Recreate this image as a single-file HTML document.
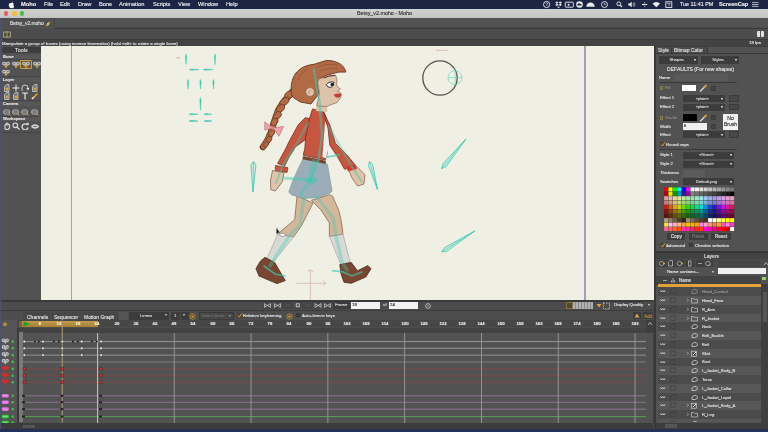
<!DOCTYPE html>
<html><head><meta charset="utf-8">
<style>
*{box-sizing:border-box;margin:0;padding:0}
html,body{width:768px;height:432px;overflow:hidden;background:#4b4b4b;font-family:"Liberation Sans",sans-serif;color:#ddd;position:relative}
.a{position:absolute}
.t{position:absolute;white-space:nowrap;line-height:1;will-change:transform;-webkit-text-stroke:0.12px currentColor}
</style></head><body>

<div class="a" style="left:0px;top:0px;width:768px;height:9px;background:#1c2543;"></div>
<div class="t" style="left:21px;top:2.1px;font-size:5.7px;color:#f4f4f4;font-weight:bold">Moho</div>
<div class="t" style="left:44px;top:2.1px;font-size:5.7px;color:#f4f4f4;">File</div>
<div class="t" style="left:60px;top:2.1px;font-size:5.7px;color:#f4f4f4;">Edit</div>
<div class="t" style="left:78px;top:2.1px;font-size:5.7px;color:#f4f4f4;">Draw</div>
<div class="t" style="left:98.5px;top:2.1px;font-size:5.7px;color:#f4f4f4;">Bone</div>
<div class="t" style="left:119px;top:2.1px;font-size:5.7px;color:#f4f4f4;">Animation</div>
<div class="t" style="left:152.5px;top:2.1px;font-size:5.7px;color:#f4f4f4;">Scripts</div>
<div class="t" style="left:178px;top:2.1px;font-size:5.7px;color:#f4f4f4;">View</div>
<div class="t" style="left:198px;top:2.1px;font-size:5.7px;color:#f4f4f4;">Window</div>
<div class="t" style="left:226px;top:2.1px;font-size:5.7px;color:#f4f4f4;">Help</div>
<svg class="a" style="left:8px;top:1px" width="7" height="8" viewBox="0 0 7 8"><path d="M3.5 2.2 C2.6 1.6 1 1.9 0.8 3.6 C0.6 5.3 1.8 7.4 2.6 7.3 C3.1 7.2 3.2 7 3.6 7 C4 7 4.1 7.3 4.6 7.3 C5.3 7.2 5.9 6.2 6.2 5.4 C5.2 5 5.1 3.4 6 2.8 C5.4 2 4.4 1.8 3.5 2.2 Z M3.6 1.8 C3.6 1 4.2 0.5 4.8 0.4 C4.9 1.2 4.3 1.8 3.6 1.8Z" fill="#f4f4f4"/></svg>
<div class="t" style="left:679.7px;top:2.2px;font-size:5.4px;color:#f4f4f4;">Tue 11:41 PM</div>
<div class="t" style="left:719px;top:2.1px;font-size:5.6px;color:#f4f4f4;font-weight:bold">ScreenCap</div>
<svg class="a" style="left:540px;top:0" width="228" height="9" viewBox="540 0 228 9" fill="none" stroke="#ececec" stroke-width="0.9">
<circle cx="546.6" cy="4.5" r="3.1"/><path d="M545.6 3.6 q1-1.6 2 0 q0 1-1 1.3 v0.6" stroke-width="0.7"/>
<path d="M555.2 2.6 l1.7-1.1 1.7 1.1 -1.7 1.1z M558.6 2.6 l1.7-1.1 1.7 1.1 -1.7 1.1z M555.2 4.8 l1.7-1.1 1.7 1.1 -1.7 1.1z M558.6 4.8 l1.7-1.1 1.7 1.1 -1.7 1.1z M556.9 6.8 l1.7 1.1 1.7-1.1" fill="#ececec" stroke="none"/>
<rect x="565.3" y="2.2" width="8" height="5" rx="0.6"/><circle cx="568.6" cy="4.7" r="1" fill="#ececec" stroke="none"/>
<circle cx="579.5" cy="4.5" r="3.3" fill="#ececec" stroke="none"/><path d="M577.3 5.6 h4.5 q0-1.8-1.8-1.8 q-0.6-1-1.8-0.2 q-1 0.4-0.9 2z" fill="#1c2543" stroke="none"/>
<path d="M586.3 6.8 a4.2 4.2 0 0 1 8.4 0z" fill="#ececec" stroke="none"/>
<circle cx="604.5" cy="4.5" r="3"/><path d="M604.5 2.8 v1.8 h1.4" stroke-width="0.7"/>
<circle cx="618.8" cy="3.8" r="1.9"/><path d="M620.2 5.2 l1.8 1.8" stroke-width="1.1"/>
<path d="M628.2 3.4 h1.4 l2.1-1.7 v5.6 l-2.1-1.7 h-1.4z" fill="#ececec" stroke="none"/><path d="M633 3 q1 1.5 0 3 M634.2 2.2 q1.6 2.3 0 4.6" stroke-width="0.6"/>
<path d="M642 4.5 h5.4" stroke-width="1.1"/><path d="M644.7 2 v1.3 M644.7 5.7 v1.3" stroke-width="0.7"/>
<path d="M656.3 7.3 l-3.8-3.8 q3.8-3 7.6 0z" fill="#ececec" stroke="none"/>
<rect x="665.8" y="1.8" width="6" height="5.6"/><path d="M667 3.5 h3.5 M669 3.5 v2.8" stroke-width="0.6"/>
<path d="M752 2.6 h6.5 M752 4.5 h6.5 M752 6.4 h6.5" stroke-width="0.7"/>
</svg>
<div class="a" style="left:0px;top:9px;width:768px;height:8.8px;background:linear-gradient(#d2d2ce,#c4c4c4);"></div>
<div class="a" style="left:3.8px;top:11.2px;width:4.6px;height:4.6px;border-radius:50%;background:#ee5b55"></div>
<div class="a" style="left:12.2px;top:11.2px;width:4.6px;height:4.6px;border-radius:50%;background:#f5b93c"></div>
<div class="a" style="left:19.6px;top:11.2px;width:4.6px;height:4.6px;border-radius:50%;background:#43c13f"></div>
<div class="t" style="left:357px;top:11.2px;font-size:5.35px;color:#2e2e2e;">Betsy_v2.moho - Moho</div>
<div class="a" style="left:0px;top:17.8px;width:768px;height:9.7px;background:#525252;"></div>
<div class="a" style="left:0px;top:27.5px;width:768px;height:1.5px;background:#3a3a3a;"></div>
<div class="a" style="left:2px;top:18.3px;width:53px;height:10.5px;background:#505050;border-right:0.8px solid #444"></div>
<div class="t" style="left:10px;top:22.4px;font-size:4.9px;color:#e2e2e2;">Betsy_v2.moho</div>
<svg class="a" style="left:45px;top:21px" width="6" height="6"><path d="M1.2 5 L4.8 1" stroke="#c09a50" stroke-width="1.6"/><circle cx="3" cy="3" r="1.2" fill="#e0c080"/></svg>
<div class="a" style="left:0px;top:29px;width:768px;height:9.8px;background:#4c4c4c;"></div>
<svg class="a" style="left:3px;top:30.5px" width="8" height="7"><rect x="0.5" y="1" width="7" height="5" fill="none" stroke="#b9b090" stroke-width="0.8"/><path d="M4 0 v7" stroke="#d4a53c" stroke-width="0.8"/></svg>
<div class="a" style="left:756.5px;top:30.8px;width:7.5px;height:5.8px;background:#e0e0e0;border-radius:1px"></div>
<div class="a" style="left:760px;top:30.8px;width:0.6px;height:5.8px;background:#555;"></div>
<div class="a" style="left:0px;top:38.8px;width:768px;height:7px;background:#434343;"></div>
<div class="a" style="left:0px;top:38.8px;width:768px;height:0.9px;background:#3a3a3a;"></div>
<div class="t" style="left:2px;top:41.5px;font-size:4.4px;color:#e6e6e6;">Manipulate a group of bones (using inverse kinematics) (hold &lt;alt&gt; to rotate a single bone)</div>
<div class="t" style="left:749px;top:40.5px;font-size:4.4px;color:#e6e6e6;">18 fps</div>
<div class="a" style="left:0px;top:45.7px;width:41.3px;height:254.6px;background:#525252;"></div>
<div class="a" style="left:1.8px;top:46.5px;width:39px;height:6.8px;background:#3c3c3c;"></div>
<div class="t" style="left:14.5px;top:47.6px;font-size:5.4px;color:#e0e0e0;">Tools</div>
<div class="a" style="left:1.8px;top:54.6px;width:39px;height:4.2px;background:#575757;"></div>
<div class="t" style="left:2.5px;top:54.800000000000004px;font-size:4.2px;color:#e6e6e6;font-weight:bold">Bone</div>
<div class="a" style="left:1.8px;top:78.1px;width:39px;height:4.2px;background:#575757;"></div>
<div class="t" style="left:2.5px;top:78.3px;font-size:4.2px;color:#e6e6e6;font-weight:bold">Layer</div>
<div class="a" style="left:1.8px;top:101.9px;width:39px;height:4.2px;background:#575757;"></div>
<div class="t" style="left:2.5px;top:102.10000000000001px;font-size:4.2px;color:#e6e6e6;font-weight:bold">Camera</div>
<div class="a" style="left:1.8px;top:117.1px;width:39px;height:4.2px;background:#575757;"></div>
<div class="t" style="left:2.5px;top:117.3px;font-size:4.2px;color:#e6e6e6;font-weight:bold">Workspace</div>
<div class="a" style="left:1.8px;top:59.3px;width:39px;height:0.8px;background:#464646;"></div>
<div class="a" style="left:1.8px;top:76.3px;width:39px;height:0.8px;background:#464646;"></div>
<div class="a" style="left:1.8px;top:100.3px;width:39px;height:0.8px;background:#464646;"></div>
<div class="a" style="left:1.8px;top:116.2px;width:39px;height:0.8px;background:#464646;"></div>
<div class="a" style="left:1.8px;top:131.5px;width:39px;height:0.8px;background:#464646;"></div>
<svg class="a" style="left:2px;top:60.5px" width="8" height="8"><circle cx="2" cy="2.6" r="1.9" fill="#c8c8c8"/><circle cx="6" cy="2.6" r="1.9" fill="#c8c8c8"/><rect x="2" y="1.5" width="4" height="3" fill="#bdbdbd"/><circle cx="2" cy="2.6" r="0.8" fill="#666"/><circle cx="6" cy="2.6" r="0.8" fill="#666"/><path d="M2.3 4.6 h3.4 l-1.7 3z" fill="#d9a43a"/></svg>
<svg class="a" style="left:12px;top:60.5px" width="8" height="8"><circle cx="2" cy="2.6" r="1.9" fill="#c8c8c8"/><circle cx="6" cy="2.6" r="1.9" fill="#c8c8c8"/><rect x="2" y="1.5" width="4" height="3" fill="#bdbdbd"/><circle cx="2" cy="2.6" r="0.8" fill="#666"/><circle cx="6" cy="2.6" r="0.8" fill="#666"/><path d="M2.3 4.6 h3.4 l-1.7 3z" fill="#d9a43a"/></svg>
<div class="a" style="left:20px;top:59.7px;width:12px;height:9px;background:#6b5a35;border:0.9px solid #c9a04a;border-radius:1px"></div>
<svg class="a" style="left:22px;top:60.5px" width="8" height="8"><circle cx="2" cy="2.6" r="1.9" fill="#c8c8c8"/><circle cx="6" cy="2.6" r="1.9" fill="#c8c8c8"/><rect x="2" y="1.5" width="4" height="3" fill="#bdbdbd"/><circle cx="2" cy="2.6" r="0.8" fill="#666"/><circle cx="6" cy="2.6" r="0.8" fill="#666"/><path d="M2.3 4.6 h3.4 l-1.7 3z" fill="#d9a43a"/></svg>
<svg class="a" style="left:32.5px;top:60.5px" width="8" height="8"><circle cx="2" cy="2.6" r="1.9" fill="#c8c8c8"/><circle cx="6" cy="2.6" r="1.9" fill="#c8c8c8"/><rect x="2" y="1.5" width="4" height="3" fill="#bdbdbd"/><circle cx="2" cy="2.6" r="0.8" fill="#666"/><circle cx="6" cy="2.6" r="0.8" fill="#666"/><path d="M2.3 4.6 h3.4 l-1.7 3z" fill="#d9a43a"/></svg>
<svg class="a" style="left:2px;top:68.5px" width="8" height="8"><circle cx="2" cy="2.6" r="1.9" fill="#c8c8c8"/><circle cx="6" cy="2.6" r="1.9" fill="#c8c8c8"/><rect x="2" y="1.5" width="4" height="3" fill="#bdbdbd"/><circle cx="2" cy="2.6" r="0.8" fill="#666"/><circle cx="6" cy="2.6" r="0.8" fill="#666"/><path d="M2.3 4.6 h3.4 l-1.7 3z" fill="#d9a43a"/></svg>
<svg class="a" style="left:3px;top:84px" width="8" height="8"><path d="M1.5 7.5 V2.5 l2-2 h2.5 v7z" stroke="#ccc" stroke-width="0.8" fill="#777"/><circle cx="4" cy="5" r="1.4" fill="#d9a43a"/></svg>
<svg class="a" style="left:11.5px;top:84px" width="8" height="8"><path d="M4 0.5 v7 M0.5 4 h7" stroke="#eee" stroke-width="1"/></svg>
<svg class="a" style="left:20.5px;top:84px" width="8" height="8"><path d="M1 7 V4 a3 3 0 0 1 6 0" stroke="#ddd" stroke-width="0.9" fill="none"/><path d="M5.5 4 l1.5 2.5 1.5-2.5z" fill="#eee"/></svg>
<svg class="a" style="left:30.5px;top:84px" width="8" height="8"><path d="M1.5 7.5 V2.5 l2-2 h2.5 v7z" stroke="#ccc" stroke-width="0.8" fill="#777"/><circle cx="4" cy="5" r="1.4" fill="#d9a43a"/></svg>
<svg class="a" style="left:3px;top:92px" width="8" height="8"><path d="M1.5 7.5 V2.5 l2-2 h2.5 v7z" stroke="#ccc" stroke-width="0.8" fill="#777"/><circle cx="4" cy="5" r="1.4" fill="#d9a43a"/></svg>
<svg class="a" style="left:11.5px;top:92px" width="8" height="8"><path d="M1.5 7.5 V2.5 l2-2 h2.5 v7z" stroke="#ccc" stroke-width="0.8" fill="#777"/><circle cx="4" cy="5" r="1.4" fill="#d9a43a"/></svg>
<svg class="a" style="left:20.5px;top:92px" width="8" height="8"><path d="M1 1 h6 M4 1 v6.5" stroke="#eee" stroke-width="1.1"/></svg>
<svg class="a" style="left:30.5px;top:92px" width="8" height="8"><path d="M1 7 L6.5 1.5" stroke="#d9a43a" stroke-width="1.6"/><path d="M1 7 L3 5" stroke="#ddd" stroke-width="1.4"/></svg>
<svg class="a" style="left:3px;top:108px" width="8" height="8"><rect x="0.8" y="2" width="5.5" height="4" rx="1" fill="none" stroke="#ccc" stroke-width="0.8"/><path d="M0.8 4 h5.5" stroke="#ccc" stroke-width="0.6"/><path d="M5.5 5.5 l2 2" stroke="#d9a43a" stroke-width="1"/></svg>
<svg class="a" style="left:11.5px;top:108px" width="8" height="8"><rect x="0.8" y="2" width="5.5" height="4" rx="1" fill="none" stroke="#ccc" stroke-width="0.8"/><path d="M0.8 4 h5.5" stroke="#ccc" stroke-width="0.6"/><path d="M5.5 5.5 l2 2" stroke="#d9a43a" stroke-width="1"/></svg>
<svg class="a" style="left:20.5px;top:108px" width="8" height="8"><rect x="0.8" y="2" width="5.5" height="4" rx="1" fill="none" stroke="#ccc" stroke-width="0.8"/><path d="M0.8 4 h5.5" stroke="#ccc" stroke-width="0.6"/><path d="M5.5 5.5 l2 2" stroke="#d9a43a" stroke-width="1"/></svg>
<svg class="a" style="left:30.5px;top:108px" width="8" height="8"><rect x="0.8" y="2" width="5.5" height="4" rx="1" fill="none" stroke="#ccc" stroke-width="0.8"/><path d="M0.8 4 h5.5" stroke="#ccc" stroke-width="0.6"/><path d="M5.5 5.5 l2 2" stroke="#d9a43a" stroke-width="1"/></svg>
<svg class="a" style="left:3px;top:122px" width="8" height="8"><path d="M2 7 V3 q0.8-1.5 1.5 0 V1.5 q0.8-1 1.5 0 V3 q0.8-1 1.5 0 V6 q-0.5 1.5-2 1.5z" fill="none" stroke="#ddd" stroke-width="1.1"/></svg>
<svg class="a" style="left:11.5px;top:122px" width="8" height="8"><circle cx="3.3" cy="3.3" r="2.3" fill="none" stroke="#ddd" stroke-width="1.1"/><path d="M5 5 l2.5 2.5" stroke="#ddd" stroke-width="1.2"/></svg>
<svg class="a" style="left:20.5px;top:122px" width="8" height="8"><path d="M6.5 3 a3 3 0 1 0 0.5 2.5" stroke="#ddd" stroke-width="1.3" fill="none"/><path d="M5 1 l2.5 2.5 0.3-2.7z" fill="#ddd"/></svg>
<svg class="a" style="left:30.5px;top:122px" width="8" height="8"><path d="M0.5 4.5 q3.5-3 7 0 q-3.5 3-7 0" stroke="#ddd" stroke-width="1.3" fill="#777"/></svg>
<div class="a" style="left:0px;top:17.8px;width:1.5px;height:414px;background:#4a526c;"></div>
<div class="a" style="left:41.3px;top:45.9px;width:612.6px;height:254.4px;background:#f0efe4;"></div>
<div class="a" style="left:70.6px;top:45.9px;width:1.5px;height:254.4px;background:#a29eba;"></div>
<div class="a" style="left:584.3px;top:45.9px;width:1.5px;height:254.4px;background:#a29eba;"></div>
<div class="a" style="left:653.9px;top:45.7px;width:2.2px;height:386px;background:#383838;"></div>
<svg class="a" style="left:0;top:0" width="768" height="432" viewBox="0 0 768 432">
<path d="M176.5 57.8 h3.5" stroke="#d08080" stroke-width="0.7"/>
<path d="M186 54 L186.65 56.625 L186 64.5 L185.35 56.625Z" fill="#3dc9b3" stroke="#3dc9b3" stroke-width="0.5"/>
<path d="M215 54 L215.65 56.625 L215 64.5 L214.35 56.625Z" fill="#3dc9b3" stroke="#3dc9b3" stroke-width="0.5"/>
<path d="M189 69.6 L191.5 68.94999999999999 L199 69.6 L191.5 70.25Z" fill="#3dc9b3" stroke="#3dc9b3" stroke-width="0.5"/>
<path d="M203 69.6 L205.5 68.94999999999999 L213 69.6 L205.5 70.25Z" fill="#3dc9b3" stroke="#3dc9b3" stroke-width="0.5"/>
<path d="M188 79.5 L188.65 81.875 L188 89 L187.35 81.875Z" fill="#3dc9b3" stroke="#3dc9b3" stroke-width="0.5"/>
<path d="M200.5 79.5 L201.15 81.875 L200.5 89 L199.85 81.875Z" fill="#3dc9b3" stroke="#3dc9b3" stroke-width="0.5"/>
<path d="M213.5 79.5 L214.15 81.875 L213.5 89 L212.85 81.875Z" fill="#3dc9b3" stroke="#3dc9b3" stroke-width="0.5"/>
<path d="M200.5 97.5 L201.15 100.625 L200.5 110 L199.85 100.625Z" fill="#3dc9b3" stroke="#3dc9b3" stroke-width="0.5"/>
<path d="M189 114.2 L191.25 113.55 L198 114.2 L191.25 114.85000000000001Z" fill="#3dc9b3" stroke="#3dc9b3" stroke-width="0.5"/>
<path d="M204 114.2 L206.0 113.55 L212 114.2 L206.0 114.85000000000001Z" fill="#3dc9b3" stroke="#3dc9b3" stroke-width="0.5"/>
<path d="M189 121 L191.25 120.35 L198 121 L191.25 121.65Z" fill="#3dc9b3" stroke="#3dc9b3" stroke-width="0.5"/>
<path d="M204 121 L206.0 120.35 L212 121 L206.0 121.65Z" fill="#3dc9b3" stroke="#3dc9b3" stroke-width="0.5"/>
<circle cx="440" cy="78" r="17.2" fill="none" stroke="#555550" stroke-width="1.3"/>
<circle cx="455" cy="77.6" r="7" fill="none" stroke="#5fd3c0" stroke-width="0.8" opacity="0.8"/>
<path d="M448 77.6 h14 M455 70.6 v14" stroke="#5fd3c0" stroke-width="0.8" opacity="0.8"/>
<path d="M436 50.3 h11.5" stroke="#d8a09a" stroke-width="0.9" stroke-dasharray="1.6 0.5"/>
<path d="M441.7 168.6 L446.24 166.38 L466 139 L442.99 163.72Z" fill="#a8e6da" fill-opacity="0.5" stroke="#3dc9b3" stroke-width="0.8"/>
<path d="M441.7 168.6 L466 139" stroke="#3dc9b3" stroke-width="0.6"/>
<path d="M441.7 252 L446.79 251.25 L474.7 231 L444.53 247.71Z" fill="#a8e6da" fill-opacity="0.5" stroke="#3dc9b3" stroke-width="0.8"/>
<path d="M441.7 252 L474.7 231" stroke="#3dc9b3" stroke-width="0.6"/>
<path d="M369.5 161.5 L368.30 165.48 L377.5 189.5 L372.62 164.24Z" fill="#a8e6da" fill-opacity="0.5" stroke="#3dc9b3" stroke-width="0.8"/>
<path d="M369.5 161.5 L377.5 189.5" stroke="#3dc9b3" stroke-width="0.6"/>
<path d="M253.5 161.5 L250.94 165.12 L253 192 L255.94 165.20Z" fill="#a8e6da" fill-opacity="0.5" stroke="#3dc9b3" stroke-width="0.8"/>
<path d="M253.5 161.5 L253 192" stroke="#3dc9b3" stroke-width="0.6"/>
<path d="M292 92 C287 98 281 104 277.5 112 C275 119 273 125 271 132 C269 138 267 142 263 147" stroke="#6a3a22" stroke-width="6.5" fill="none" stroke-linecap="round"/>
<path d="M292 92 C287 98 281 104 277.5 112 C275 119 273 125 271 132 C269 138 267 142 263.5 146.5" stroke="#b26a45" stroke-width="5" fill="none" stroke-linecap="round"/>
<ellipse cx="289.5" cy="94.5" rx="5.2" ry="3.4" transform="rotate(-25 289.5 94.5)" fill="#b26a45" stroke="#6a3a22" stroke-width="0.7"/>
<ellipse cx="284.5" cy="101.5" rx="5" ry="3.3" transform="rotate(-35 284.5 101.5)" fill="#b26a45" stroke="#6a3a22" stroke-width="0.7"/>
<ellipse cx="280.5" cy="108.5" rx="4.8" ry="3.2" transform="rotate(-40 280.5 108.5)" fill="#b26a45" stroke="#6a3a22" stroke-width="0.7"/>
<ellipse cx="277.5" cy="115.5" rx="4.6" ry="3.1" transform="rotate(-45 277.5 115.5)" fill="#b26a45" stroke="#6a3a22" stroke-width="0.7"/>
<ellipse cx="274.5" cy="122" rx="4.2" ry="2.9" transform="rotate(-50 274.5 122)" fill="#b26a45" stroke="#6a3a22" stroke-width="0.7"/>
<ellipse cx="271.5" cy="133" rx="3.8" ry="2.7" transform="rotate(-55 271.5 133)" fill="#b26a45" stroke="#6a3a22" stroke-width="0.7"/>
<ellipse cx="269" cy="139.5" rx="3.5" ry="2.5" transform="rotate(-55 269 139.5)" fill="#b26a45" stroke="#6a3a22" stroke-width="0.7"/>
<ellipse cx="266" cy="144.5" rx="3" ry="2.1" transform="rotate(-50 266 144.5)" fill="#b26a45" stroke="#6a3a22" stroke-width="0.7"/>
<path d="M273 128 L264.8 121.9 L264.8 130.1 Z M273 128 L283.6 126.4 L279 136.2 Z" fill="#eea3aa" stroke="#b0606a" stroke-width="0.6"/><circle cx="273" cy="128" r="1.7" fill="#e0808a"/>
<path d="M305.3 117.6 L298.4 124.5 L290 139.8 L284.5 150.9 L277.6 163.4 L284.5 166.2 L288.7 157.8 L295.6 146.7 L305.3 139.8 L311 119Z" fill="#c6563f" stroke="#7a2e22" stroke-width="0.8"/>
<path d="M275.4 165.4 L288 167.7 L287 172.4 L275.4 171.2Z" fill="#c6563f" stroke="#7a2e22" stroke-width="0.7"/>
<path d="M272.5 170.5 L284 172.5 L282.4 181.6 L275.4 191 L270.8 189.7 L270.5 180Z" fill="#dcc3a9" stroke="#8a6a55" stroke-width="0.8"/>
<path d="M297 196 L294.7 219.7 L277.8 234 L293.6 237 L301.7 225.3 L313 203Z" fill="#d4b79b" stroke="#8a6a55" stroke-width="0.8"/>
<path d="M277.8 234 L293.6 237 L274 261 L266.5 259.6Z" fill="#d9dad6" stroke="#9a9a9a" stroke-width="0.6"/>
<path d="M265 257.3 L274.8 262.6 L280 271.6 L285.3 280.6 L277 283.6 L259 276 L256 268.6 L260.5 261Z" fill="#7a4632" stroke="#4a2a1c" stroke-width="0.8"/>
<path d="M311.4 200.3 L321 210 L329.4 223 L329.4 236.5 L343 234.4 L341.9 225 L340.8 218.75 L338.75 210.4 L332.5 196 L329.4 194.7Z" fill="#d4b79b" stroke="#8a6a55" stroke-width="0.8"/>
<path d="M329.4 236.5 L343 234.4 L350.2 262.5 L340.8 264.6Z" fill="#d9dad6" stroke="#9a9a9a" stroke-width="0.6"/>
<path d="M339.8 264.6 L351.25 262.5 L357.5 270.8 L367.9 265.6 L371 268.75 L365.8 277 L351.25 283.3 L344 282.3 L340.8 273Z" fill="#7a4632" stroke="#4a2a1c" stroke-width="0.8"/>
<path d="M303.2 158.5 L327.5 164.3 L329.8 178 L332.1 190.9 L329.8 193.2 L317 197.8 L303.2 198.4 L291.6 195 L288.7 192 L292.8 180.5 L298.6 167.7Z" fill="#9aadb8" stroke="#7a8a92" stroke-width="0.5"/>
<path d="M312.5 108.9 L323.5 111.3 L326 117 L329 128.5 L327 154.4 L325.1 160 L303.2 155.1 L304.8 148.6 L305.7 137.3 L309.7 117.8Z" fill="#c6563f" stroke="#7a2e22" stroke-width="0.8"/>
<path d="M325.1 121 L331.7 134 L326.1 158.3 L322.4 157Z" fill="#eef0ee"/>
<path d="M303.2 155.9 L325.9 160.8 L325.9 164 L302.4 159.2Z" fill="#7a4630"/>
<path d="M323.3 111.9 L329.8 124.8 L335.4 143.3 L346.5 154.4 L355.7 165.6 L344.6 169.3 L337.2 156.3 L329.8 145.2 L328 128Z" fill="#c6563f" stroke="#7a2e22" stroke-width="0.8"/>
<path d="M348 168.5 L356 165.8 L365 174.8 L364 184 L357.6 186 L352 178Z" fill="#dcc3a9" stroke="#8a6a55" stroke-width="0.8"/>
<path d="M346 166.5 L355.5 164.5 L357 169 L348 171.5Z" fill="#d33a2c"/>
<path d="M316.5 102 L327.5 102 L327 112 L316 111Z" fill="#dcc3a9"/>
<path d="M292.6 97 C290 92 290.5 80 296 73 C300 68 306 65 314 64.3 L325.9 60.6 C331 60.3 334 61 337 62.4 C340 63.5 342 65 343.5 67 C345 69 345.5 71 345.8 72.1 L338.9 72.1 L335.2 73 L327.8 74.9 L320.4 78.1 L317.6 81.9 L318 88 L319.4 93.2 L315.5 98.3 L311 104 L300.3 102Z" fill="#b26a45" stroke="#6a3a22" stroke-width="0.9"/>
<path d="M318 67 q8-4 20-2 M320 71 q8-4 18-2 M298 80 q3-8 10-11" stroke="#6a3a22" stroke-width="0.5" fill="none" opacity="0.7"/>
<path d="M319 79 L327.8 76.3 L335.6 75.3 L337 79.6 L336.5 84.9 L338.2 87.5 L340.4 88.9 L338.2 91 L341.3 93.7 L340.4 98 L337 102.5 L330 105 L327 106.5 L316.8 106 L319.4 93.2 L317.6 82Z" fill="#dcc3a9" stroke="#8a6a55" stroke-width="0.7"/>
<circle cx="310" cy="92" r="4.4" fill="#dcc3a9" stroke="#8a6a55" stroke-width="0.7"/><path d="M309 94 q-1-3 2-4" stroke="#8a6a55" stroke-width="0.5" fill="none"/>
<path d="M326.4 84.6 q2.5-3.4 7.5-2.4 q0.3 3.8-3 5.2 q-3.3 0.6-4.5-2.8z" fill="#fff" stroke="#1a1a1a" stroke-width="0.9"/><circle cx="332" cy="84.4" r="1.5" fill="#111"/>
<path d="M323.8 77.9 q5.5-2.6 11.4-2.6" stroke="#5a3220" stroke-width="1" fill="none"/>
<path d="M336 91.2 q1.4 0.6 2.4 0" stroke="#9a7a65" stroke-width="0.5" fill="none"/>
<path d="M333.6 94.6 q4-1.6 7.7-0.9 q0.2 3.2-3.4 4.1 q-2.6 0.3-4.3-3.2z" fill="#c43a3a"/>
<path d="M313.9 68.9 L317.6 92 L320 104 L320 112" stroke="#3dc9b3" stroke-width="2.2" fill="none" opacity="0.55" stroke-linecap="round"/>
<path d="M320 112 L322 135 L318 162 L311 178 L300 196" stroke="#3dc9b3" stroke-width="2.4" fill="none" opacity="0.5" stroke-linecap="round"/>
<path d="M308 123 L296 145 L283 165" stroke="#3dc9b3" stroke-width="2.6" fill="none" opacity="0.4" stroke-linecap="round"/>
<path d="M283 165 L276 183" stroke="#3dc9b3" stroke-width="1.4" fill="none" opacity="0.6" stroke-linecap="round"/>
<path d="M329 127 L342 150 L352 167" stroke="#3dc9b3" stroke-width="2.6" fill="none" opacity="0.35" stroke-linecap="round"/>
<path d="M352 167 L362 182" stroke="#3dc9b3" stroke-width="1.4" fill="none" opacity="0.6" stroke-linecap="round"/>
<path d="M283.5 178 L300 179.2 L316 180.5" stroke="#3dc9b3" stroke-width="3" fill="none" opacity="0.45" stroke-linecap="round"/>
<path d="M305 180 L312 175.5 L317 180.5 L312 185Z" fill="#3dc9b3" opacity="0.4"/>
<path d="M312 159 L317 160 L313 176 L309.5 187.4 L308 176Z" fill="#3dc9b3" opacity="0.4"/>
<path d="M327 157 L339 155" stroke="#3dc9b3" stroke-width="1.8" fill="none" opacity="0.6" stroke-linecap="round"/>
<path d="M304 198 L300 225 L290 235 L276 256 L270 266" stroke="#3dc9b3" stroke-width="3.5" fill="none" opacity="0.35" stroke-linecap="round"/>
<path d="M316 196 L333 218 L336 236 L342 262 L347 270" stroke="#3dc9b3" stroke-width="3.5" fill="none" opacity="0.35" stroke-linecap="round"/>
<path d="M264 266 L275 274 L285 276" stroke="#3dc9b3" stroke-width="1.6" fill="none" opacity="0.7" stroke-linecap="round"/>
<path d="M332.5 270.8 L343 271.9 L352 276 L362 272" stroke="#3dc9b3" stroke-width="1.6" fill="none" opacity="0.7" stroke-linecap="round"/>
<path d="M310.4 269.5 V300 M296 283.3 H325.5 M323 280.5 l2.8 2.8 -2.8 2.8 M307.6 272.3 l2.8-2.8 2.8 2.8" stroke="#d6bcb2" stroke-width="0.9" fill="none"/>
<path d="M276.3 227.5 L276.3 234.5 L278.1 232.8 L280.3 233Z" fill="#111" stroke="#fff" stroke-width="0.3"/>
<rect x="280" y="233.3" width="5" height="3" rx="1.2" fill="#fff" stroke="#555" stroke-width="0.5"/>
</svg>
<div class="a" style="left:656px;top:45.7px;width:112px;height:386.3px;background:#525252;"></div>
<div class="a" style="left:656px;top:45.7px;width:112px;height:1.3px;background:#3e3e3e;"></div>
<div class="a" style="left:656.5px;top:46.5px;width:15px;height:6.8px;background:#4a4a4a;border-right:0.8px solid #3a3a3a"></div>
<div class="a" style="left:672px;top:46.5px;width:36px;height:6.8px;background:#4a4a4a;border-right:0.8px solid #3a3a3a"></div>
<div class="t" style="left:658.3px;top:47.9px;font-size:5px;color:#e0e0e0;">Style</div>
<div class="t" style="left:674.3px;top:47.9px;font-size:5px;color:#e0e0e0;">Bitmap Color</div>
<div class="a" style="left:656px;top:53.4px;width:112px;height:1px;background:#3a3a3a;"></div>
<div class="a" style="left:659px;top:56.4px;width:39px;height:7.2px;background:#3c3c3c;"></div>
<div class="t" style="left:659px;top:58.1px;font-size:4.2px;color:#ddd;width:35px;text-align:center">Shapes</div>
<div class="t" style="left:694px;top:58.1px;font-size:4.2px;color:#e6e6e6;">&#9662;</div>
<div class="a" style="left:701px;top:56.4px;width:38px;height:7.2px;background:#3c3c3c;"></div>
<div class="t" style="left:701px;top:58.1px;font-size:4.2px;color:#ddd;width:34px;text-align:center">Styles</div>
<div class="t" style="left:735px;top:58.1px;font-size:4.2px;color:#e6e6e6;">&#9662;</div>
<div class="t" style="left:667px;top:67px;font-size:5.1px;color:#e6e6e6;">DEFAULTS (For new shapes)</div>
<div class="t" style="left:659px;top:76.1px;font-size:4.2px;color:#e6e6e6;">Name</div>
<div class="a" style="left:674px;top:74px;width:54px;height:7px;background:#595959;"></div>
<div class="a" style="left:660px;top:82.3px;width:77px;height:0.7px;background:#3a3a3a;"></div>
<div class="a" style="left:659.5px;top:86.3px;width:3.6px;height:3.6px;background:#6a5a3a;border:0.5px solid #8a7a50"></div>
<div class="t" style="left:665px;top:86.2px;font-size:4.2px;color:#8a8a8a;">Fill</div>
<div class="a" style="left:682px;top:84.8px;width:14.3px;height:6.5px;background:#ffffff;"></div>
<svg class="a" style="left:699px;top:84px" width="9" height="8"><path d="M1 7.5 L6 2.5" stroke="#ddd" stroke-width="1.3"/><path d="M5 3.5 L7.5 1" stroke="#d4a043" stroke-width="1.8"/></svg>
<div class="a" style="left:711px;top:85.5px;width:5px;height:5px;background:#444;border-radius:1px;border:0.5px solid #3a3a3a"></div>
<div class="t" style="left:659.5px;top:96.4px;font-size:4.2px;color:#e6e6e6;">Effect 1</div>
<div class="a" style="left:682.6px;top:94.9px;width:42.5px;height:7px;background:#3c3c3c;"></div>
<div class="t" style="left:682.6px;top:96.60000000000001px;font-size:4px;color:#ddd;width:38.5px;text-align:center">&lt;plain&gt;</div>
<div class="t" style="left:721.1px;top:96.60000000000001px;font-size:4px;color:#e6e6e6;">&#9662;</div>
<div class="a" style="left:729px;top:95.2px;width:10px;height:6.5px;background:#484848;border:0.5px solid #3a3a3a"></div>
<div class="t" style="left:659.5px;top:105.0px;font-size:4.2px;color:#e6e6e6;">Effect 2</div>
<div class="a" style="left:682.6px;top:103.5px;width:42.5px;height:7px;background:#3c3c3c;"></div>
<div class="t" style="left:682.6px;top:105.2px;font-size:4px;color:#ddd;width:38.5px;text-align:center">&lt;plain&gt;</div>
<div class="t" style="left:721.1px;top:105.2px;font-size:4px;color:#e6e6e6;">&#9662;</div>
<div class="a" style="left:729px;top:103.8px;width:10px;height:6.5px;background:#484848;border:0.5px solid #3a3a3a"></div>
<div class="a" style="left:659.5px;top:116px;width:3.6px;height:3.6px;background:#6a5a3a;border:0.5px solid #8a7a50"></div>
<div class="t" style="left:665px;top:116px;font-size:4.2px;color:#8a8a8a;">Stroke</div>
<div class="a" style="left:683px;top:114.2px;width:14.3px;height:6.8px;background:#000;"></div>
<svg class="a" style="left:699px;top:113.5px" width="9" height="8"><path d="M1 7.5 L6 2.5" stroke="#ddd" stroke-width="1.3"/><path d="M5 3.5 L7.5 1" stroke="#d4a043" stroke-width="1.8"/></svg>
<div class="a" style="left:711px;top:115px;width:5px;height:5px;background:#444;border-radius:1px;border:0.5px solid #3a3a3a"></div>
<div class="a" style="left:723px;top:114px;width:15px;height:15.5px;background:#f2f2f2;"></div>
<div class="t" style="left:723px;top:116.3px;font-size:5px;color:#222;width:15px;text-align:center">No</div>
<div class="t" style="left:723px;top:121.8px;font-size:5px;color:#222;width:15px;text-align:center">Brush</div>
<div class="t" style="left:659.5px;top:124.5px;font-size:4.2px;color:#e6e6e6;">Width</div>
<div class="a" style="left:683px;top:123.3px;width:24px;height:6.5px;background:#f0f0f0;"></div>
<div class="t" style="left:684px;top:124.2px;font-size:4.2px;color:#222;">6</div>
<div class="a" style="left:711px;top:124px;width:5px;height:5px;background:#444;border-radius:1px;border:0.5px solid #3a3a3a"></div>
<div class="t" style="left:659.5px;top:132.5px;font-size:4.2px;color:#e6e6e6;">Effect</div>
<div class="a" style="left:682.6px;top:131px;width:42.5px;height:7px;background:#3c3c3c;"></div>
<div class="t" style="left:682.6px;top:132.7px;font-size:4px;color:#ddd;width:38.5px;text-align:center">&lt;plain&gt;</div>
<div class="t" style="left:721.1px;top:132.7px;font-size:4px;color:#e6e6e6;">&#9662;</div>
<div class="a" style="left:729px;top:131.3px;width:10px;height:6.5px;background:#484848;border:0.5px solid #3a3a3a"></div>
<svg class="a" style="left:659.5px;top:141.5px" width="6" height="6"><rect x="0.3" y="0.5" width="4.4" height="4.4" fill="#5a4a30" stroke="#333" stroke-width="0.4"/><path d="M1 2.6 l1.3 1.5 2.7-3.8" stroke="#e0a842" stroke-width="0.9" fill="none"/></svg>
<div class="t" style="left:666px;top:142.5px;font-size:4.3px;color:#e6e6e6;">Round caps</div>
<div class="a" style="left:660px;top:149px;width:77px;height:0.7px;background:#3a3a3a;"></div>
<div class="t" style="left:659.5px;top:153.0px;font-size:4.2px;color:#e6e6e6;">Style 1</div>
<div class="a" style="left:683px;top:151.5px;width:51px;height:7px;background:#3c3c3c;"></div>
<div class="t" style="left:683px;top:153.1px;font-size:4.2px;color:#ddd;width:47px;text-align:center">&lt;None&gt;</div>
<div class="t" style="left:730px;top:153.1px;font-size:4.2px;color:#e6e6e6;">&#9662;</div>
<div class="t" style="left:659.5px;top:162.0px;font-size:4.2px;color:#e6e6e6;">Style 2</div>
<div class="a" style="left:683px;top:160.5px;width:51px;height:7px;background:#3c3c3c;"></div>
<div class="t" style="left:683px;top:162.1px;font-size:4.2px;color:#ddd;width:47px;text-align:center">&lt;None&gt;</div>
<div class="t" style="left:730px;top:162.1px;font-size:4.2px;color:#e6e6e6;">&#9662;</div>
<div class="t" style="left:659.5px;top:171px;font-size:4.2px;color:#e6e6e6;">Thickness</div>
<div class="a" style="left:683px;top:169.5px;width:22px;height:7px;background:#5c5c5c;"></div>
<div class="t" style="left:659.5px;top:179.5px;font-size:4.2px;color:#e6e6e6;">Swatches</div>
<div class="a" style="left:683px;top:178px;width:51px;height:7px;background:#3c3c3c;"></div>
<div class="t" style="left:683px;top:179.6px;font-size:4.2px;color:#ddd;width:47px;text-align:center">Default.png</div>
<div class="t" style="left:730px;top:179.6px;font-size:4.2px;color:#e6e6e6;">&#9662;</div>
<svg class="a" style="left:0;top:0" width="768" height="432" viewBox="0 0 768 432">
<rect x="663.9" y="187.2" width="70.4" height="44.0" fill="#3a3a3a"/>
<rect x="664.10" y="187.40" width="4.05" height="4.05" fill="#ff0000"/>
<rect x="668.50" y="187.40" width="4.05" height="4.05" fill="#ffff00"/>
<rect x="672.90" y="187.40" width="4.05" height="4.05" fill="#00ff00"/>
<rect x="677.30" y="187.40" width="4.05" height="4.05" fill="#00ffff"/>
<rect x="681.70" y="187.40" width="4.05" height="4.05" fill="#0000ff"/>
<rect x="686.10" y="187.40" width="4.05" height="4.05" fill="#ff00ff"/>
<rect x="690.50" y="187.40" width="4.05" height="4.05" fill="#ffffff"/>
<rect x="694.90" y="187.40" width="4.05" height="4.05" fill="#f0f0f0"/>
<rect x="699.30" y="187.40" width="4.05" height="4.05" fill="#e1e1e1"/>
<rect x="703.70" y="187.40" width="4.05" height="4.05" fill="#d2d2d2"/>
<rect x="708.10" y="187.40" width="4.05" height="4.05" fill="#c3c3c3"/>
<rect x="712.50" y="187.40" width="4.05" height="4.05" fill="#b4b4b4"/>
<rect x="716.90" y="187.40" width="4.05" height="4.05" fill="#a5a5a5"/>
<rect x="721.30" y="187.40" width="4.05" height="4.05" fill="#969696"/>
<rect x="725.70" y="187.40" width="4.05" height="4.05" fill="#878787"/>
<rect x="730.10" y="187.40" width="4.05" height="4.05" fill="#787878"/>
<rect x="664.10" y="191.80" width="4.05" height="4.05" fill="#c00000"/>
<rect x="668.50" y="191.80" width="4.05" height="4.05" fill="#e8e800"/>
<rect x="672.90" y="191.80" width="4.05" height="4.05" fill="#00a000"/>
<rect x="677.30" y="191.80" width="4.05" height="4.05" fill="#0090d0"/>
<rect x="681.70" y="191.80" width="4.05" height="4.05" fill="#202090"/>
<rect x="686.10" y="191.80" width="4.05" height="4.05" fill="#a000a0"/>
<rect x="690.50" y="191.80" width="4.05" height="4.05" fill="#828282"/>
<rect x="694.90" y="191.80" width="4.05" height="4.05" fill="#737373"/>
<rect x="699.30" y="191.80" width="4.05" height="4.05" fill="#646464"/>
<rect x="703.70" y="191.80" width="4.05" height="4.05" fill="#585858"/>
<rect x="708.10" y="191.80" width="4.05" height="4.05" fill="#4b4b4b"/>
<rect x="712.50" y="191.80" width="4.05" height="4.05" fill="#3e3e3e"/>
<rect x="716.90" y="191.80" width="4.05" height="4.05" fill="#323232"/>
<rect x="721.30" y="191.80" width="4.05" height="4.05" fill="#232323"/>
<rect x="725.70" y="191.80" width="4.05" height="4.05" fill="#141414"/>
<rect x="730.10" y="191.80" width="4.05" height="4.05" fill="#000000"/>
<rect x="664.10" y="196.20" width="4.05" height="4.05" fill="#e59c9c"/>
<rect x="668.50" y="196.20" width="4.05" height="4.05" fill="#e5b79c"/>
<rect x="672.90" y="196.20" width="4.05" height="4.05" fill="#e5d39c"/>
<rect x="677.30" y="196.20" width="4.05" height="4.05" fill="#dce59c"/>
<rect x="681.70" y="196.20" width="4.05" height="4.05" fill="#c0e59c"/>
<rect x="686.10" y="196.20" width="4.05" height="4.05" fill="#a5e59c"/>
<rect x="690.50" y="196.20" width="4.05" height="4.05" fill="#9ce5ae"/>
<rect x="694.90" y="196.20" width="4.05" height="4.05" fill="#9ce5c9"/>
<rect x="699.30" y="196.20" width="4.05" height="4.05" fill="#9ce5e5"/>
<rect x="703.70" y="196.20" width="4.05" height="4.05" fill="#9cc9e5"/>
<rect x="708.10" y="196.20" width="4.05" height="4.05" fill="#9caee5"/>
<rect x="712.50" y="196.20" width="4.05" height="4.05" fill="#a59ce5"/>
<rect x="716.90" y="196.20" width="4.05" height="4.05" fill="#c09ce5"/>
<rect x="721.30" y="196.20" width="4.05" height="4.05" fill="#dc9ce5"/>
<rect x="725.70" y="196.20" width="4.05" height="4.05" fill="#e59cd3"/>
<rect x="730.10" y="196.20" width="4.05" height="4.05" fill="#e59cb7"/>
<rect x="664.10" y="200.60" width="4.05" height="4.05" fill="#d87777"/>
<rect x="668.50" y="200.60" width="4.05" height="4.05" fill="#d89b77"/>
<rect x="672.90" y="200.60" width="4.05" height="4.05" fill="#d8c077"/>
<rect x="677.30" y="200.60" width="4.05" height="4.05" fill="#ccd877"/>
<rect x="681.70" y="200.60" width="4.05" height="4.05" fill="#a7d877"/>
<rect x="686.10" y="200.60" width="4.05" height="4.05" fill="#83d877"/>
<rect x="690.50" y="200.60" width="4.05" height="4.05" fill="#77d88f"/>
<rect x="694.90" y="200.60" width="4.05" height="4.05" fill="#77d8b4"/>
<rect x="699.30" y="200.60" width="4.05" height="4.05" fill="#77d8d8"/>
<rect x="703.70" y="200.60" width="4.05" height="4.05" fill="#77b4d8"/>
<rect x="708.10" y="200.60" width="4.05" height="4.05" fill="#778fd8"/>
<rect x="712.50" y="200.60" width="4.05" height="4.05" fill="#8377d8"/>
<rect x="716.90" y="200.60" width="4.05" height="4.05" fill="#a777d8"/>
<rect x="721.30" y="200.60" width="4.05" height="4.05" fill="#cc77d8"/>
<rect x="725.70" y="200.60" width="4.05" height="4.05" fill="#d877c0"/>
<rect x="730.10" y="200.60" width="4.05" height="4.05" fill="#d8779b"/>
<rect x="664.10" y="205.00" width="4.05" height="4.05" fill="#d81515"/>
<rect x="668.50" y="205.00" width="4.05" height="4.05" fill="#d85e15"/>
<rect x="672.90" y="205.00" width="4.05" height="4.05" fill="#d8a715"/>
<rect x="677.30" y="205.00" width="4.05" height="4.05" fill="#c0d815"/>
<rect x="681.70" y="205.00" width="4.05" height="4.05" fill="#77d815"/>
<rect x="686.10" y="205.00" width="4.05" height="4.05" fill="#2ed815"/>
<rect x="690.50" y="205.00" width="4.05" height="4.05" fill="#15d846"/>
<rect x="694.90" y="205.00" width="4.05" height="4.05" fill="#15d88f"/>
<rect x="699.30" y="205.00" width="4.05" height="4.05" fill="#15d8d8"/>
<rect x="703.70" y="205.00" width="4.05" height="4.05" fill="#158fd8"/>
<rect x="708.10" y="205.00" width="4.05" height="4.05" fill="#1546d8"/>
<rect x="712.50" y="205.00" width="4.05" height="4.05" fill="#2e15d8"/>
<rect x="716.90" y="205.00" width="4.05" height="4.05" fill="#7715d8"/>
<rect x="721.30" y="205.00" width="4.05" height="4.05" fill="#c015d8"/>
<rect x="725.70" y="205.00" width="4.05" height="4.05" fill="#d815a7"/>
<rect x="730.10" y="205.00" width="4.05" height="4.05" fill="#d8155e"/>
<rect x="664.10" y="209.40" width="4.05" height="4.05" fill="#930e0e"/>
<rect x="668.50" y="209.40" width="4.05" height="4.05" fill="#93400e"/>
<rect x="672.90" y="209.40" width="4.05" height="4.05" fill="#93720e"/>
<rect x="677.30" y="209.40" width="4.05" height="4.05" fill="#83930e"/>
<rect x="681.70" y="209.40" width="4.05" height="4.05" fill="#51930e"/>
<rect x="686.10" y="209.40" width="4.05" height="4.05" fill="#1f930e"/>
<rect x="690.50" y="209.40" width="4.05" height="4.05" fill="#0e9330"/>
<rect x="694.90" y="209.40" width="4.05" height="4.05" fill="#0e9361"/>
<rect x="699.30" y="209.40" width="4.05" height="4.05" fill="#0e9393"/>
<rect x="703.70" y="209.40" width="4.05" height="4.05" fill="#0e6193"/>
<rect x="708.10" y="209.40" width="4.05" height="4.05" fill="#0e3093"/>
<rect x="712.50" y="209.40" width="4.05" height="4.05" fill="#1f0e93"/>
<rect x="716.90" y="209.40" width="4.05" height="4.05" fill="#510e93"/>
<rect x="721.30" y="209.40" width="4.05" height="4.05" fill="#830e93"/>
<rect x="725.70" y="209.40" width="4.05" height="4.05" fill="#930e72"/>
<rect x="730.10" y="209.40" width="4.05" height="4.05" fill="#930e40"/>
<rect x="664.10" y="213.80" width="4.05" height="4.05" fill="#660a0a"/>
<rect x="668.50" y="213.80" width="4.05" height="4.05" fill="#662c0a"/>
<rect x="672.90" y="213.80" width="4.05" height="4.05" fill="#664f0a"/>
<rect x="677.30" y="213.80" width="4.05" height="4.05" fill="#5a660a"/>
<rect x="681.70" y="213.80" width="4.05" height="4.05" fill="#38660a"/>
<rect x="686.10" y="213.80" width="4.05" height="4.05" fill="#15660a"/>
<rect x="690.50" y="213.80" width="4.05" height="4.05" fill="#0a6621"/>
<rect x="694.90" y="213.80" width="4.05" height="4.05" fill="#0a6643"/>
<rect x="699.30" y="213.80" width="4.05" height="4.05" fill="#0a6666"/>
<rect x="703.70" y="213.80" width="4.05" height="4.05" fill="#0a4366"/>
<rect x="708.10" y="213.80" width="4.05" height="4.05" fill="#0a2166"/>
<rect x="712.50" y="213.80" width="4.05" height="4.05" fill="#150a66"/>
<rect x="716.90" y="213.80" width="4.05" height="4.05" fill="#380a66"/>
<rect x="721.30" y="213.80" width="4.05" height="4.05" fill="#5a0a66"/>
<rect x="725.70" y="213.80" width="4.05" height="4.05" fill="#660a4f"/>
<rect x="730.10" y="213.80" width="4.05" height="4.05" fill="#660a2c"/>
<rect x="664.10" y="218.20" width="4.05" height="4.05" fill="#b0a080"/>
<rect x="668.50" y="218.20" width="4.05" height="4.05" fill="#908060"/>
<rect x="672.90" y="218.20" width="4.05" height="4.05" fill="#706040"/>
<rect x="677.30" y="218.20" width="4.05" height="4.05" fill="#504030"/>
<rect x="681.70" y="218.20" width="4.05" height="4.05" fill="#302820"/>
<rect x="686.10" y="218.20" width="4.05" height="4.05" fill="#a09070"/>
<rect x="690.50" y="218.20" width="4.05" height="4.05" fill="#806850"/>
<rect x="694.90" y="218.20" width="4.05" height="4.05" fill="#605040"/>
<rect x="699.30" y="218.20" width="4.05" height="4.05" fill="#504028"/>
<rect x="703.70" y="218.20" width="4.05" height="4.05" fill="#403020"/>
<rect x="708.10" y="218.20" width="4.05" height="4.05" fill="#ffffff"/>
<rect x="712.50" y="218.20" width="4.05" height="4.05" fill="#ffffe0"/>
<rect x="716.90" y="218.20" width="4.05" height="4.05" fill="#ffff80"/>
<rect x="721.30" y="218.20" width="4.05" height="4.05" fill="#ffff40"/>
<rect x="725.70" y="218.20" width="4.05" height="4.05" fill="#ffff00"/>
<rect x="730.10" y="218.20" width="4.05" height="4.05" fill="#ffff00"/>
<rect x="664.10" y="222.60" width="4.05" height="4.05" fill="#ffe040"/>
<rect x="668.50" y="222.60" width="4.05" height="4.05" fill="#ffc0e0"/>
<rect x="672.90" y="222.60" width="4.05" height="4.05" fill="#ffb0c0"/>
<rect x="677.30" y="222.60" width="4.05" height="4.05" fill="#ffc080"/>
<rect x="681.70" y="222.60" width="4.05" height="4.05" fill="#ffa040"/>
<rect x="686.10" y="222.60" width="4.05" height="4.05" fill="#ffc000"/>
<rect x="690.50" y="222.60" width="4.05" height="4.05" fill="#ffb000"/>
<rect x="694.90" y="222.60" width="4.05" height="4.05" fill="#ffa000"/>
<rect x="699.30" y="222.60" width="4.05" height="4.05" fill="#ff80ff"/>
<rect x="703.70" y="222.60" width="4.05" height="4.05" fill="#ffa0c0"/>
<rect x="708.10" y="222.60" width="4.05" height="4.05" fill="#ff9080"/>
<rect x="712.50" y="222.60" width="4.05" height="4.05" fill="#ff8040"/>
<rect x="716.90" y="222.60" width="4.05" height="4.05" fill="#ffa040"/>
<rect x="721.30" y="222.60" width="4.05" height="4.05" fill="#ff60c0"/>
<rect x="725.70" y="222.60" width="4.05" height="4.05" fill="#ff80e0"/>
<rect x="730.10" y="222.60" width="4.05" height="4.05" fill="#ff40c0"/>
<rect x="664.10" y="227.00" width="4.05" height="4.05" fill="#ff60a0"/>
<rect x="668.50" y="227.00" width="4.05" height="4.05" fill="#ff6060"/>
<rect x="672.90" y="227.00" width="4.05" height="4.05" fill="#ff6020"/>
<rect x="677.30" y="227.00" width="4.05" height="4.05" fill="#ff5000"/>
<rect x="681.70" y="227.00" width="4.05" height="4.05" fill="#ff30c0"/>
<rect x="686.10" y="227.00" width="4.05" height="4.05" fill="#ff20a0"/>
<rect x="690.50" y="227.00" width="4.05" height="4.05" fill="#ff2060"/>
<rect x="694.90" y="227.00" width="4.05" height="4.05" fill="#ff2020"/>
<rect x="699.30" y="227.00" width="4.05" height="4.05" fill="#ff4000"/>
<rect x="703.70" y="227.00" width="4.05" height="4.05" fill="#ff00ff"/>
<rect x="708.10" y="227.00" width="4.05" height="4.05" fill="#ff00c0"/>
<rect x="712.50" y="227.00" width="4.05" height="4.05" fill="#ff0080"/>
<rect x="716.90" y="227.00" width="4.05" height="4.05" fill="#ff0040"/>
<rect x="721.30" y="227.00" width="4.05" height="4.05" fill="#ff0000"/>
<rect x="725.70" y="227.00" width="4.05" height="4.05" fill="#e00000"/>
<rect x="730.10" y="227.00" width="4.05" height="4.05" fill="#ffffff"/>
</svg>
<div class="a" style="left:666.5px;top:232.8px;width:18.5px;height:7.2px;background:#3c3c3c;"></div>
<div class="t" style="left:666.5px;top:234.70000000000002px;font-size:4.8px;color:#e6e6e6;width:18.5px;text-align:center">Copy</div>
<div class="a" style="left:689px;top:232.8px;width:18.5px;height:7.2px;background:#3c3c3c;"></div>
<div class="t" style="left:689px;top:234.70000000000002px;font-size:4.8px;color:#777;width:18.5px;text-align:center">Paste</div>
<div class="a" style="left:711px;top:232.8px;width:20px;height:7.2px;background:#3c3c3c;"></div>
<div class="t" style="left:711px;top:234.70000000000002px;font-size:4.8px;color:#e6e6e6;width:20px;text-align:center">Reset</div>
<svg class="a" style="left:659.5px;top:242.5px" width="6" height="6"><rect x="0.3" y="0.5" width="4.4" height="4.4" fill="#5a4a30" stroke="#333" stroke-width="0.4"/><path d="M1 2.6 l1.3 1.5 2.7-3.8" stroke="#e0a842" stroke-width="0.9" fill="none"/></svg>
<div class="t" style="left:665.5px;top:243.5px;font-size:4.3px;color:#e6e6e6;">Advanced</div>
<div class="a" style="left:689px;top:243px;width:4.4px;height:4.4px;background:#444;border:0.4px solid #333"></div>
<div class="t" style="left:695px;top:243.5px;font-size:4.3px;color:#e6e6e6;">Checker selection</div>
<div class="a" style="left:656px;top:251.3px;width:112px;height:1.3px;background:#363636;"></div>
<div class="a" style="left:656px;top:252.5px;width:112px;height:6.8px;background:#424242;"></div>
<div class="t" style="left:703.5px;top:253.6px;font-size:5px;color:#e0e0e0;">Layers</div>
<div class="a" style="left:656px;top:259.3px;width:112px;height:8px;background:#4a4a4a;"></div>
<div class="a" style="left:658px;top:260px;width:8px;height:6.5px;background:#3e3e3e;"></div>
<div class="a" style="left:667px;top:260px;width:8px;height:6.5px;background:#3e3e3e;"></div>
<div class="a" style="left:676px;top:260px;width:8px;height:6.5px;background:#3e3e3e;"></div>
<div class="a" style="left:686px;top:260px;width:8px;height:6.5px;background:#3e3e3e;"></div>
<div class="a" style="left:696px;top:260px;width:8px;height:6.5px;background:#3e3e3e;"></div>
<div class="a" style="left:705px;top:260px;width:8px;height:6.5px;background:#3e3e3e;"></div>
<svg class="a" style="left:656px;top:259px" width="112" height="9" fill="none" stroke="#ddd" stroke-width="0.6"><circle cx="5.5" cy="4.5" r="2.2"/><path d="M6.5 4.5 l2.5 -1 v2z" fill="#d9a43a" stroke="none"/><path d="M12.5 7 V3 l1.5-1.5 h2.5 v5.5z"/><circle cx="23.5" cy="4.5" r="2.2"/><path d="M24.5 4.5 l2.5 -1 v2z" fill="#d9a43a" stroke="none"/><rect x="32.5" y="2" width="2.5" height="5"/><path d="M42 4.5 h4"/><circle cx="52" cy="4.5" r="2.2"/><path d="M53 5.5 l1.5 1.5"/><path d="M108 6 l2-2.5 2 2.5" stroke="#eee"/></svg>
<div class="a" style="left:718px;top:268.2px;width:47.5px;height:6px;background:#f0f0f0;"></div>
<div class="a" style="left:718px;top:260px;width:42px;height:6.5px;background:#464646;"></div>
<div class="t" style="left:667px;top:269.6px;font-size:4.3px;color:#e6e6e6;">Name contains...</div>
<div class="t" style="left:711.5px;top:269.6px;font-size:4px;color:#ccc;">&#9662;</div>
<div class="a" style="left:656px;top:275.5px;width:105px;height:8px;background:#434343;"></div>
<div class="t" style="left:663px;top:277.5px;font-size:4px;color:#ccc;">&#8212;</div>
<svg class="a" style="left:670px;top:276.5px" width="6" height="6"><path d="M3 1 v1.5 M1 5 a2 2 0 0 1 4 0z" stroke="#ddd" stroke-width="0.6" fill="none"/></svg>
<div class="t" style="left:679px;top:278.5px;font-size:4.5px;color:#e6e6e6;">Name</div>
<div class="a" style="left:762px;top:276.8px;width:3.5px;height:3.5px;background:#9ccf6a;"></div>
<div class="a" style="left:656px;top:283.5px;width:105px;height:0.8px;background:#3a3a3a;"></div>
<div class="a" style="left:657.5px;top:284.2px;width:103.5px;height:3.2px;background:#e2a13a;"></div>
<div class="a" style="left:761.2px;top:283.5px;width:6.8px;height:140px;background:#3f3f3f;"></div>
<div class="a" style="left:762.5px;top:292px;width:4.5px;height:30px;background:#555;"></div>
<div class="a" style="left:656px;top:287.4px;width:105px;height:135px;overflow:hidden">
<div class="a" style="left:1.5px;top:0.00px;width:103.5px;height:8.77px;background:#4b4b4b"></div>
<svg class="a" style="left:0;top:0.00px" width="105" height="9"><path d="M4.5 3.5 l1 1.5 1-1.5 M7 3.5 l1 1.5 1-1.5" stroke="#eee" stroke-width="0.8" fill="none"/><rect x="15" y="2" width="4.5" height="4.5" fill="none" stroke="#3c3c3c" stroke-width="0.6"/><path d="M36 6.5 q-1-3 2-4 q3 -0.5 3.5 1.5 q0.5 2-2.5 2.5z" stroke="#9a9a9a" stroke-width="0.7" fill="none"/></svg>
<div class="t" style="left:46px;top:2.90px;font-size:4.15px;color:#9a9a9a">Head_Control</div>
<div class="a" style="left:1.5px;top:8.77px;width:103.5px;height:8.77px;background:#575757"></div>
<svg class="a" style="left:0;top:8.77px" width="105" height="9"><path d="M4.5 3.5 l1 1.5 1-1.5 M7 3.5 l1 1.5 1-1.5" stroke="#eee" stroke-width="0.8" fill="none"/><rect x="15" y="2" width="4.5" height="4.5" fill="none" stroke="#3c3c3c" stroke-width="0.6"/><path d="M31 2.8 l1.5 1.5 -1.5 1.5" stroke="#ccc" stroke-width="0.6" fill="none"/><path d="M35.5 2.5 h2 l0.7 0.8 h3.3 v3.7 h-6z" stroke="#ddd" stroke-width="0.6" fill="none"/></svg>
<div class="t" style="left:46px;top:11.67px;font-size:4.15px;color:#e0e0e0">Head_Face</div>
<div class="a" style="left:1.5px;top:17.54px;width:103.5px;height:8.77px;background:#4b4b4b"></div>
<svg class="a" style="left:0;top:17.54px" width="105" height="9"><path d="M4.5 3.5 l1 1.5 1-1.5 M7 3.5 l1 1.5 1-1.5" stroke="#eee" stroke-width="0.8" fill="none"/><rect x="15" y="2" width="4.5" height="4.5" fill="none" stroke="#3c3c3c" stroke-width="0.6"/><path d="M31 2.8 l1.5 1.5 -1.5 1.5" stroke="#ccc" stroke-width="0.6" fill="none"/><path d="M35.5 2.5 h2 l0.7 0.8 h3.3 v3.7 h-6z" stroke="#ddd" stroke-width="0.6" fill="none"/></svg>
<div class="t" style="left:46px;top:20.44px;font-size:4.15px;color:#e0e0e0">R_Arm</div>
<div class="a" style="left:1.5px;top:26.31px;width:103.5px;height:8.77px;background:#575757"></div>
<svg class="a" style="left:0;top:26.31px" width="105" height="9"><path d="M4.5 3.5 l1 1.5 1-1.5 M7 3.5 l1 1.5 1-1.5" stroke="#eee" stroke-width="0.8" fill="none"/><rect x="15" y="2" width="4.5" height="4.5" fill="none" stroke="#3c3c3c" stroke-width="0.6"/><path d="M31 2.8 l1.5 1.5 -1.5 1.5" stroke="#ccc" stroke-width="0.6" fill="none"/><path d="M35.5 2.5 h2 l0.7 0.8 h3.3 v3.7 h-6z" stroke="#ddd" stroke-width="0.6" fill="none"/></svg>
<div class="t" style="left:46px;top:29.21px;font-size:4.15px;color:#e0e0e0">R_Jacket</div>
<div class="a" style="left:1.5px;top:35.08px;width:103.5px;height:8.77px;background:#4b4b4b"></div>
<svg class="a" style="left:0;top:35.08px" width="105" height="9"><path d="M4.5 3.5 l1 1.5 1-1.5 M7 3.5 l1 1.5 1-1.5" stroke="#eee" stroke-width="0.8" fill="none"/><rect x="15" y="2" width="4.5" height="4.5" fill="none" stroke="#3c3c3c" stroke-width="0.6"/><path d="M36 6.5 q-1-3 2-4 q3 -0.5 3.5 1.5 q0.5 2-2.5 2.5z" stroke="#e0e0e0" stroke-width="0.7" fill="none"/></svg>
<div class="t" style="left:46px;top:37.98px;font-size:4.15px;color:#e0e0e0">Neck</div>
<div class="a" style="left:1.5px;top:43.85px;width:103.5px;height:8.77px;background:#575757"></div>
<svg class="a" style="left:0;top:43.85px" width="105" height="9"><path d="M4.5 3.5 l1 1.5 1-1.5 M7 3.5 l1 1.5 1-1.5" stroke="#eee" stroke-width="0.8" fill="none"/><rect x="15" y="2" width="4.5" height="4.5" fill="none" stroke="#3c3c3c" stroke-width="0.6"/><path d="M36 6.5 q-1-3 2-4 q3 -0.5 3.5 1.5 q0.5 2-2.5 2.5z" stroke="#e0e0e0" stroke-width="0.7" fill="none"/></svg>
<div class="t" style="left:46px;top:46.75px;font-size:4.15px;color:#e0e0e0">Belt_Buckle</div>
<div class="a" style="left:1.5px;top:52.62px;width:103.5px;height:8.77px;background:#4b4b4b"></div>
<svg class="a" style="left:0;top:52.62px" width="105" height="9"><path d="M4.5 3.5 l1 1.5 1-1.5 M7 3.5 l1 1.5 1-1.5" stroke="#eee" stroke-width="0.8" fill="none"/><rect x="15" y="2" width="4.5" height="4.5" fill="none" stroke="#3c3c3c" stroke-width="0.6"/><path d="M36 6.5 q-1-3 2-4 q3 -0.5 3.5 1.5 q0.5 2-2.5 2.5z" stroke="#e0e0e0" stroke-width="0.7" fill="none"/></svg>
<div class="t" style="left:46px;top:55.52px;font-size:4.15px;color:#e0e0e0">Belt</div>
<div class="a" style="left:1.5px;top:61.39px;width:103.5px;height:8.77px;background:#575757"></div>
<svg class="a" style="left:0;top:61.39px" width="105" height="9"><path d="M4.5 3.5 l1 1.5 1-1.5 M7 3.5 l1 1.5 1-1.5" stroke="#eee" stroke-width="0.8" fill="none"/><rect x="15" y="2" width="4.5" height="4.5" fill="none" stroke="#3c3c3c" stroke-width="0.6"/><path d="M31 2.8 l1.5 1.5 -1.5 1.5" stroke="#ccc" stroke-width="0.6" fill="none"/><rect x="35.5" y="2.2" width="5" height="5" stroke="#ddd" stroke-width="0.6" fill="none"/><path d="M37 6 l3-3" stroke="#fff" stroke-width="1"/></svg>
<div class="t" style="left:46px;top:64.29px;font-size:4.15px;color:#e0e0e0">Skirt</div>
<div class="a" style="left:1.5px;top:70.16px;width:103.5px;height:8.77px;background:#4b4b4b"></div>
<svg class="a" style="left:0;top:70.16px" width="105" height="9"><path d="M4.5 3.5 l1 1.5 1-1.5 M7 3.5 l1 1.5 1-1.5" stroke="#eee" stroke-width="0.8" fill="none"/><rect x="15" y="2" width="4.5" height="4.5" fill="none" stroke="#3c3c3c" stroke-width="0.6"/><path d="M36 6.5 q-1-3 2-4 q3 -0.5 3.5 1.5 q0.5 2-2.5 2.5z" stroke="#e0e0e0" stroke-width="0.7" fill="none"/></svg>
<div class="t" style="left:46px;top:73.06px;font-size:4.15px;color:#e0e0e0">Bust</div>
<div class="a" style="left:1.5px;top:78.93px;width:103.5px;height:8.77px;background:#575757"></div>
<svg class="a" style="left:0;top:78.93px" width="105" height="9"><path d="M4.5 3.5 l1 1.5 1-1.5 M7 3.5 l1 1.5 1-1.5" stroke="#eee" stroke-width="0.8" fill="none"/><rect x="15" y="2" width="4.5" height="4.5" fill="none" stroke="#3c3c3c" stroke-width="0.6"/><path d="M36 6.5 q-1-3 2-4 q3 -0.5 3.5 1.5 q0.5 2-2.5 2.5z" stroke="#e0e0e0" stroke-width="0.7" fill="none"/></svg>
<div class="t" style="left:46px;top:81.83px;font-size:4.15px;color:#e0e0e0">L_Jacket_Body_B</div>
<div class="a" style="left:1.5px;top:87.70px;width:103.5px;height:8.77px;background:#4b4b4b"></div>
<svg class="a" style="left:0;top:87.70px" width="105" height="9"><path d="M4.5 3.5 l1 1.5 1-1.5 M7 3.5 l1 1.5 1-1.5" stroke="#eee" stroke-width="0.8" fill="none"/><rect x="15" y="2" width="4.5" height="4.5" fill="none" stroke="#3c3c3c" stroke-width="0.6"/><path d="M36 6.5 q-1-3 2-4 q3 -0.5 3.5 1.5 q0.5 2-2.5 2.5z" stroke="#e0e0e0" stroke-width="0.7" fill="none"/></svg>
<div class="t" style="left:46px;top:90.60px;font-size:4.15px;color:#e0e0e0">Torso</div>
<div class="a" style="left:1.5px;top:96.47px;width:103.5px;height:8.77px;background:#575757"></div>
<svg class="a" style="left:0;top:96.47px" width="105" height="9"><path d="M4.5 3.5 l1 1.5 1-1.5 M7 3.5 l1 1.5 1-1.5" stroke="#eee" stroke-width="0.8" fill="none"/><rect x="15" y="2" width="4.5" height="4.5" fill="none" stroke="#3c3c3c" stroke-width="0.6"/><path d="M36 6.5 q-1-3 2-4 q3 -0.5 3.5 1.5 q0.5 2-2.5 2.5z" stroke="#e0e0e0" stroke-width="0.7" fill="none"/></svg>
<div class="t" style="left:46px;top:99.37px;font-size:4.15px;color:#e0e0e0">L_Jacket_Collar</div>
<div class="a" style="left:1.5px;top:105.24px;width:103.5px;height:8.77px;background:#4b4b4b"></div>
<svg class="a" style="left:0;top:105.24px" width="105" height="9"><path d="M4.5 3.5 l1 1.5 1-1.5 M7 3.5 l1 1.5 1-1.5" stroke="#eee" stroke-width="0.8" fill="none"/><rect x="15" y="2" width="4.5" height="4.5" fill="none" stroke="#3c3c3c" stroke-width="0.6"/><path d="M36 6.5 q-1-3 2-4 q3 -0.5 3.5 1.5 q0.5 2-2.5 2.5z" stroke="#e0e0e0" stroke-width="0.7" fill="none"/></svg>
<div class="t" style="left:46px;top:108.14px;font-size:4.15px;color:#e0e0e0">L_Jacket_Lapel</div>
<div class="a" style="left:1.5px;top:114.01px;width:103.5px;height:8.77px;background:#575757"></div>
<svg class="a" style="left:0;top:114.01px" width="105" height="9"><path d="M4.5 3.5 l1 1.5 1-1.5 M7 3.5 l1 1.5 1-1.5" stroke="#eee" stroke-width="0.8" fill="none"/><rect x="15" y="2" width="4.5" height="4.5" fill="none" stroke="#3c3c3c" stroke-width="0.6"/><path d="M31 2.8 l1.5 1.5 -1.5 1.5" stroke="#ccc" stroke-width="0.6" fill="none"/><rect x="35.5" y="2.2" width="5" height="5" stroke="#ddd" stroke-width="0.6" fill="none"/><path d="M37 6 l3-3" stroke="#fff" stroke-width="1"/></svg>
<div class="t" style="left:46px;top:116.91px;font-size:4.15px;color:#e0e0e0">L_Jacket_Body_A</div>
<div class="a" style="left:1.5px;top:122.78px;width:103.5px;height:8.77px;background:#4b4b4b"></div>
<svg class="a" style="left:0;top:122.78px" width="105" height="9"><path d="M4.5 3.5 l1 1.5 1-1.5 M7 3.5 l1 1.5 1-1.5" stroke="#eee" stroke-width="0.8" fill="none"/><rect x="15" y="2" width="4.5" height="4.5" fill="none" stroke="#3c3c3c" stroke-width="0.6"/><path d="M31 2.8 l1.5 1.5 -1.5 1.5" stroke="#ccc" stroke-width="0.6" fill="none"/><path d="M35.5 2.5 h2 l0.7 0.8 h3.3 v3.7 h-6z" stroke="#ddd" stroke-width="0.6" fill="none"/></svg>
<div class="t" style="left:46px;top:125.68px;font-size:4.15px;color:#e0e0e0">R_Leg</div>
<div class="a" style="left:1.5px;top:131.55px;width:103.5px;height:8.77px;background:#575757"></div>
<svg class="a" style="left:0;top:131.55px" width="105" height="9"><path d="M4.5 3.5 l1 1.5 1-1.5 M7 3.5 l1 1.5 1-1.5" stroke="#eee" stroke-width="0.8" fill="none"/><rect x="15" y="2" width="4.5" height="4.5" fill="none" stroke="#3c3c3c" stroke-width="0.6"/><path d="M36 6.5 q-1-3 2-4 q3 -0.5 3.5 1.5 q0.5 2-2.5 2.5z" stroke="#e0e0e0" stroke-width="0.7" fill="none"/></svg>
<div class="t" style="left:46px;top:134.45px;font-size:4.15px;color:#e0e0e0">Hips</div>
</div>
<div class="a" style="left:656px;top:423px;width:112px;height:6px;background:#3e3e3e;"></div>
<div class="a" style="left:665px;top:424px;width:12px;height:4px;background:#555;"></div>
<div class="a" style="left:1.4px;top:300.3px;width:652.1px;height:131.7px;background:#4c4c4c;"></div>
<div class="a" style="left:1.4px;top:300.3px;width:652.1px;height:1.6px;background:#3a3a3a;"></div>
<div class="a" style="left:1.4px;top:301.9px;width:652.1px;height:7.8px;background:#4c4c4c;"></div>
<div class="a" style="left:1.4px;top:309.7px;width:652.1px;height:1.6px;background:#3c3c3c;"></div>
<svg class="a" style="left:0;top:0" width="768" height="432" viewBox="0 0 768 432" fill="none" stroke="#e0e0e0" stroke-width="0.7">
<rect x="263.3" y="302.2" width="8.4" height="6.6" fill="#444" stroke="none"/>
<path d="M264.5 303.6 L267.5 305.5 L264.5 307.4Z M270.5 303.6 L267.5 305.5 L270.5 307.4Z" stroke-width="0.7"/>
<rect x="273.7" y="302.2" width="7.5" height="6.6" fill="#444" stroke="none"/>
<path d="M274.45 303.6 L277.45 305.5 L274.45 307.4Z M280.45 303.6 L277.45 305.5 L280.45 307.4Z" stroke-width="0.7"/>
<rect x="282.6" y="302.2" width="10.4" height="6.6" fill="#444" stroke="none"/>
<path d="M285.8 304 l1.5 1.3 -1.5 1.3 M289.8 304 l-1.5 1.3 1.5 1.3" stroke="#666" stroke-width="0.6"/>
<rect x="294.6" y="302.2" width="6.2" height="6.6" fill="#444" stroke="none"/>
<rect x="296.20000000000005" y="303.8" width="3" height="3" stroke-width="0.8"/>
<rect x="302" y="302.2" width="11" height="6.6" fill="#444" stroke="none"/>
<path d="M305.5 304 l1.5 1.3 -1.5 1.3 M309.5 304 l-1.5 1.3 1.5 1.3" stroke="#666" stroke-width="0.6"/>
<rect x="314.4" y="302.2" width="7.3" height="6.6" fill="#444" stroke="none"/>
<path d="M315.04999999999995 303.6 L318.04999999999995 305.5 L315.04999999999995 307.4Z M321.04999999999995 303.6 L318.04999999999995 305.5 L321.04999999999995 307.4Z" stroke-width="0.7"/>
<rect x="323.2" y="302.2" width="8.8" height="6.6" fill="#444" stroke="none"/>
<path d="M324.59999999999997 303.6 L327.59999999999997 305.5 L324.59999999999997 307.4Z M330.59999999999997 303.6 L327.59999999999997 305.5 L330.59999999999997 307.4Z" stroke-width="0.7"/>
</svg>
<div class="a" style="left:333px;top:302px;width:17px;height:6.5px;background:#3c3c3c;"></div>
<div class="t" style="left:335.3px;top:303.2px;font-size:4.3px;color:#ddd;">Frame</div>
<div class="a" style="left:351px;top:301.7px;width:29px;height:7px;background:#f2f2f2;"></div>
<div class="t" style="left:352px;top:303px;font-size:4.4px;color:#222;">18</div>
<div class="t" style="left:383px;top:303.2px;font-size:4.3px;color:#ddd;">of</div>
<div class="a" style="left:389px;top:301.7px;width:29px;height:7px;background:#f2f2f2;"></div>
<div class="t" style="left:390px;top:303px;font-size:4.4px;color:#222;">24</div>
<svg class="a" style="left:424px;top:301.5px" width="8" height="8"><circle cx="4" cy="4" r="2.4" fill="none" stroke="#ddd" stroke-width="0.7"/><path d="M3 4 h2" stroke="#ddd" stroke-width="0.6"/></svg>
<div class="a" style="left:565.5px;top:302.3px;width:7.5px;height:6.5px;background:#4a4a3a;border:0.6px solid #8a7040"></div>
<div class="a" style="left:573px;top:302.3px;width:20px;height:6.5px;background:repeating-linear-gradient(90deg,#b0b0b0 0 1.5px,#8a8a8a 1.5px 3px);"></div>
<svg class="a" style="left:595px;top:302px" width="18" height="8"><path d="M1.5 2 l2.5 3.5 2.5-3.5z" fill="#e0a040"/><rect x="8.5" y="1" width="6" height="6" fill="none" stroke="#ddd" stroke-width="0.7" stroke-dasharray="1.5 1"/></svg>
<div class="t" style="left:614px;top:303.3px;font-size:4.4px;color:#e6e6e6;">Display Quality</div>
<div class="t" style="left:648px;top:303.3px;font-size:4.2px;color:#ccc;">&#9662;</div>
<div class="a" style="left:1.4px;top:311.3px;width:652.1px;height:8.9px;background:#4d4d4d;"></div>
<div class="a" style="left:23px;top:312px;width:27px;height:8px;background:#474747;"></div>
<div class="t" style="left:26.8px;top:315px;font-size:5px;color:#e4e4e4;">Channels</div>
<div class="a" style="left:51px;top:312px;width:30px;height:8px;background:#474747;"></div>
<div class="t" style="left:54px;top:315px;font-size:5px;color:#e4e4e4;">Sequencer</div>
<div class="a" style="left:82px;top:312px;width:36px;height:8px;background:#474747;"></div>
<div class="t" style="left:83.5px;top:315px;font-size:5px;color:#e4e4e4;">Motion Graph</div>
<div class="a" style="left:119px;top:312px;width:9px;height:7.5px;background:#555;"></div>
<div class="a" style="left:129.4px;top:312px;width:40px;height:7.5px;background:#3c3c3c;"></div>
<div class="t" style="left:146px;top:314.1px;font-size:4.4px;color:#ddd;transform:translateX(-50%)">Linear</div>
<div class="t" style="left:164.5px;top:313.3px;font-size:4.2px;color:#ccc;">&#9662;</div>
<div class="a" style="left:171px;top:312px;width:9px;height:7.5px;background:#3c3c3c;"></div>
<div class="t" style="left:174px;top:314.1px;font-size:4.4px;color:#ddd;">1</div>
<div class="a" style="left:180.5px;top:312px;width:8px;height:7.5px;background:#3c3c3c;"></div>
<div class="t" style="left:182.5px;top:313.3px;font-size:4.2px;color:#ccc;">&#9662;</div>
<svg class="a" style="left:188px;top:311.5px" width="9" height="9"><circle cx="4.5" cy="4.5" r="2.7" fill="#5a4a30" stroke="#b88a3a" stroke-width="0.9"/><circle cx="4.5" cy="4.5" r="1.1" fill="#d8b060"/></svg>
<div class="a" style="left:198.5px;top:312px;width:35px;height:7.5px;background:#474747;border:0.5px solid #3a3a3a"></div>
<div class="t" style="left:202px;top:314.1px;font-size:4.2px;color:#6e6e6e;">Select Bone</div>
<div class="t" style="left:228.5px;top:314.1px;font-size:4.2px;color:#999;">&#9662;</div>
<svg class="a" style="left:236.5px;top:313px" width="6" height="6"><rect x="0.3" y="0.5" width="4.4" height="4.4" fill="#5a4a30" stroke="#333" stroke-width="0.4"/><path d="M1 2.6 l1.3 1.5 2.7-3.8" stroke="#e0a842" stroke-width="0.9" fill="none"/></svg>
<div class="t" style="left:243px;top:314.2px;font-size:4.4px;color:#e6e6e6;">Relative keyframing</div>
<svg class="a" style="left:284.5px;top:311.5px" width="9" height="9"><circle cx="4.5" cy="4.5" r="2.7" fill="#5a4a30" stroke="#b88a3a" stroke-width="0.9"/><circle cx="4.5" cy="4.5" r="1.1" fill="#d8b060"/></svg>
<div class="a" style="left:296px;top:313px;width:4.4px;height:4.4px;background:#444;border:0.4px solid #333"></div>
<div class="t" style="left:302px;top:314.2px;font-size:4.4px;color:#e6e6e6;">Auto-freeze keys</div>
<svg class="a" style="left:633px;top:312.3px" width="20" height="8"><rect x="0" y="0" width="8" height="7" fill="#3c3c3c"/><path d="M1.5 5.5 l2.5-4 2.5 4z" fill="#e0a040"/><rect x="10" y="0" width="10" height="7" fill="#3c3c3c"/><text x="11" y="5.5" font-size="4.5" fill="#e0a040" font-family="Liberation Sans">Add</text></svg>
<div class="a" style="left:1.4px;top:320.2px;width:652.1px;height:7.3px;background:#474747;"></div>
<div class="a" style="left:1.4px;top:327.5px;width:652.1px;height:5.6px;background:#434343;"></div>
<div class="a" style="left:18.5px;top:320.8px;width:79px;height:5.8px;background:linear-gradient(#c29c4c,#a47f34);"></div>
<div class="a" style="left:18.5px;top:320.8px;width:3.5px;height:5.8px;background:#8a5a3a;"></div>
<svg class="a" style="left:21px;top:320.8px" width="10" height="6"><path d="M2.5 0.3 l6.5 2.6 -6.5 2.6z" fill="#1f9f25"/></svg>
<div class="t" style="left:39.800000000000004px;top:321.5px;font-size:4.3px;color:#fff3d0;transform:translateX(-50%);font-weight:bold">6</div>
<div class="t" style="left:59.00000000000001px;top:321.5px;font-size:4.3px;color:#fff3d0;transform:translateX(-50%);font-weight:bold">12</div>
<div class="t" style="left:78.2px;top:321.5px;font-size:4.3px;color:#fff3d0;transform:translateX(-50%);font-weight:bold">18</div>
<div class="t" style="left:97.4px;top:321.5px;font-size:4.3px;color:#fff3d0;transform:translateX(-50%);font-weight:bold">24</div>
<div class="t" style="left:116.6px;top:321.5px;font-size:4.3px;color:#f0f0f0;transform:translateX(-50%);font-weight:bold">30</div>
<div class="t" style="left:135.8px;top:321.5px;font-size:4.3px;color:#f0f0f0;transform:translateX(-50%);font-weight:bold">36</div>
<div class="t" style="left:155.0px;top:321.5px;font-size:4.3px;color:#f0f0f0;transform:translateX(-50%);font-weight:bold">42</div>
<div class="t" style="left:174.20000000000002px;top:321.5px;font-size:4.3px;color:#f0f0f0;transform:translateX(-50%);font-weight:bold">48</div>
<div class="t" style="left:193.4px;top:321.5px;font-size:4.3px;color:#f0f0f0;transform:translateX(-50%);font-weight:bold">54</div>
<div class="t" style="left:212.6px;top:321.5px;font-size:4.3px;color:#f0f0f0;transform:translateX(-50%);font-weight:bold">60</div>
<div class="t" style="left:231.8px;top:321.5px;font-size:4.3px;color:#f0f0f0;transform:translateX(-50%);font-weight:bold">66</div>
<div class="t" style="left:251.0px;top:321.5px;font-size:4.3px;color:#f0f0f0;transform:translateX(-50%);font-weight:bold">72</div>
<div class="t" style="left:270.20000000000005px;top:321.5px;font-size:4.3px;color:#f0f0f0;transform:translateX(-50%);font-weight:bold">78</div>
<div class="t" style="left:289.40000000000003px;top:321.5px;font-size:4.3px;color:#f0f0f0;transform:translateX(-50%);font-weight:bold">84</div>
<div class="t" style="left:308.6px;top:321.5px;font-size:4.3px;color:#f0f0f0;transform:translateX(-50%);font-weight:bold">90</div>
<div class="t" style="left:327.80000000000007px;top:321.5px;font-size:4.3px;color:#f0f0f0;transform:translateX(-50%);font-weight:bold">96</div>
<div class="t" style="left:347.00000000000006px;top:321.5px;font-size:4.3px;color:#f0f0f0;transform:translateX(-50%);font-weight:bold">102</div>
<div class="t" style="left:366.20000000000005px;top:321.5px;font-size:4.3px;color:#f0f0f0;transform:translateX(-50%);font-weight:bold">108</div>
<div class="t" style="left:385.40000000000003px;top:321.5px;font-size:4.3px;color:#f0f0f0;transform:translateX(-50%);font-weight:bold">114</div>
<div class="t" style="left:404.6px;top:321.5px;font-size:4.3px;color:#f0f0f0;transform:translateX(-50%);font-weight:bold">120</div>
<div class="t" style="left:423.80000000000007px;top:321.5px;font-size:4.3px;color:#f0f0f0;transform:translateX(-50%);font-weight:bold">126</div>
<div class="t" style="left:443.00000000000006px;top:321.5px;font-size:4.3px;color:#f0f0f0;transform:translateX(-50%);font-weight:bold">132</div>
<div class="t" style="left:462.20000000000005px;top:321.5px;font-size:4.3px;color:#f0f0f0;transform:translateX(-50%);font-weight:bold">138</div>
<div class="t" style="left:481.40000000000003px;top:321.5px;font-size:4.3px;color:#f0f0f0;transform:translateX(-50%);font-weight:bold">144</div>
<div class="t" style="left:500.6px;top:321.5px;font-size:4.3px;color:#f0f0f0;transform:translateX(-50%);font-weight:bold">150</div>
<div class="t" style="left:519.8000000000001px;top:321.5px;font-size:4.3px;color:#f0f0f0;transform:translateX(-50%);font-weight:bold">156</div>
<div class="t" style="left:539.0px;top:321.5px;font-size:4.3px;color:#f0f0f0;transform:translateX(-50%);font-weight:bold">162</div>
<div class="t" style="left:558.2px;top:321.5px;font-size:4.3px;color:#f0f0f0;transform:translateX(-50%);font-weight:bold">168</div>
<div class="t" style="left:577.4000000000001px;top:321.5px;font-size:4.3px;color:#f0f0f0;transform:translateX(-50%);font-weight:bold">174</div>
<div class="t" style="left:596.6px;top:321.5px;font-size:4.3px;color:#f0f0f0;transform:translateX(-50%);font-weight:bold">180</div>
<div class="t" style="left:615.8000000000001px;top:321.5px;font-size:4.3px;color:#f0f0f0;transform:translateX(-50%);font-weight:bold">186</div>
<div class="t" style="left:635.0000000000001px;top:321.5px;font-size:4.3px;color:#f0f0f0;transform:translateX(-50%);font-weight:bold">192</div>
<div class="a" style="left:646px;top:320.3px;width:7.5px;height:103px;background:#3e3e3e;"></div>
<svg class="a" style="left:647px;top:321px" width="6" height="6"><path d="M1 4 l2-2.5 2 2.5" stroke="#ddd" stroke-width="0.7" fill="none"/></svg>
<div class="a" style="left:1.4px;top:333px;width:652.1px;height:90.3px;background:#525252;"></div>
<div class="a" style="left:1.4px;top:320.2px;width:15.5px;height:103px;background:#545454;"></div>
<div class="a" style="left:16.9px;top:328.3px;width:2.1px;height:95px;background:#393939;"></div>
<div class="a" style="left:19.3px;top:332px;width:3.6px;height:90px;background:#7a7a7a;"></div>
<svg class="a" style="left:0;top:0" width="768" height="432" viewBox="0 0 768 432">
<rect x="23" y="341.0" width="623" height="1.1" fill="#8d8d8d"/>
<rect x="23" y="347.7" width="623" height="1.1" fill="#8d8d8d"/>
<rect x="23" y="354.6" width="623" height="1.1" fill="#8d8d8d"/>
<rect x="23" y="361.4" width="623" height="1.1" fill="#7a7a7a"/>
<rect x="23" y="368.4" width="623" height="1.1" fill="#7a4b4b"/>
<rect x="23" y="375.2" width="623" height="1.1" fill="#7a4b4b"/>
<rect x="23" y="381.7" width="623" height="1.1" fill="#7a4b4b"/>
<rect x="23" y="395.3" width="623" height="1.1" fill="#8c6f95"/>
<rect x="23" y="401.7" width="623" height="1.1" fill="#8c6f95"/>
<rect x="23" y="408.6" width="623" height="1.1" fill="#8c6f95"/>
<rect x="23" y="416.0" width="623" height="1.1" fill="#4f9a56"/>
<rect x="173.8" y="333" width="0.9" height="90" fill="#9a9a9a"/>
<rect x="250.6" y="333" width="0.9" height="90" fill="#9a9a9a"/>
<rect x="327.4000000000001" y="333" width="0.9" height="90" fill="#9a9a9a"/>
<rect x="404.20000000000005" y="333" width="0.9" height="90" fill="#9a9a9a"/>
<rect x="481.00000000000006" y="333" width="0.9" height="90" fill="#9a9a9a"/>
<rect x="557.8000000000001" y="333" width="0.9" height="90" fill="#9a9a9a"/>
<rect x="634.6000000000001" y="333" width="0.9" height="90" fill="#9a9a9a"/>
<rect x="97" y="333" width="1.1" height="90" fill="#bdbdbd"/>
<rect x="61.7" y="320.5" width="1.1" height="102" fill="#a89674"/>
<circle cx="24.4" cy="341.5" r="1.5" fill="#e0e0e0" stroke="#222" stroke-width="0.5"/>
<circle cx="43" cy="341.5" r="1.5" fill="#e0e0e0" stroke="#222" stroke-width="0.5"/>
<circle cx="62.3" cy="341.5" r="1.5" fill="#e0e0e0" stroke="#222" stroke-width="0.5"/>
<circle cx="81.7" cy="341.5" r="1.5" fill="#e0e0e0" stroke="#222" stroke-width="0.5"/>
<circle cx="101" cy="341.5" r="1.5" fill="#e0e0e0" stroke="#222" stroke-width="0.5"/>
<rect x="34" y="340.8" width="1.6" height="1.4" fill="#111"/>
<rect x="38" y="340.8" width="1.6" height="1.4" fill="#111"/>
<rect x="53" y="340.8" width="1.6" height="1.4" fill="#111"/>
<rect x="58" y="340.8" width="1.6" height="1.4" fill="#111"/>
<rect x="72" y="340.8" width="1.6" height="1.4" fill="#111"/>
<rect x="77" y="340.8" width="1.6" height="1.4" fill="#111"/>
<rect x="91" y="340.8" width="1.6" height="1.4" fill="#111"/>
<rect x="96" y="340.8" width="1.6" height="1.4" fill="#111"/>
<circle cx="24.4" cy="348.2" r="1.5" fill="#e0e0e0" stroke="#222" stroke-width="0.5"/>
<circle cx="24.4" cy="355.1" r="1.5" fill="#e0e0e0" stroke="#222" stroke-width="0.5"/>
<circle cx="43" cy="348.2" r="1.5" fill="#e0e0e0" stroke="#222" stroke-width="0.5"/>
<circle cx="43" cy="355.1" r="1.5" fill="#e0e0e0" stroke="#222" stroke-width="0.5"/>
<circle cx="62.3" cy="348.2" r="1.5" fill="#e0e0e0" stroke="#222" stroke-width="0.5"/>
<circle cx="62.3" cy="355.1" r="1.5" fill="#e0e0e0" stroke="#222" stroke-width="0.5"/>
<circle cx="81.7" cy="348.2" r="1.5" fill="#e0e0e0" stroke="#222" stroke-width="0.5"/>
<circle cx="81.7" cy="355.1" r="1.5" fill="#e0e0e0" stroke="#222" stroke-width="0.5"/>
<circle cx="101" cy="348.2" r="1.5" fill="#e0e0e0" stroke="#222" stroke-width="0.5"/>
<circle cx="101" cy="355.1" r="1.5" fill="#e0e0e0" stroke="#222" stroke-width="0.5"/>
<circle cx="24.4" cy="368.9" r="1.6" fill="#e03030" stroke="#222" stroke-width="0.5"/>
<circle cx="24.4" cy="375.7" r="1.6" fill="#e03030" stroke="#222" stroke-width="0.5"/>
<circle cx="24.4" cy="382.2" r="1.6" fill="#e03030" stroke="#222" stroke-width="0.5"/>
<circle cx="62.3" cy="368.9" r="1.6" fill="#e03030" stroke="#222" stroke-width="0.5"/>
<circle cx="62.3" cy="375.7" r="1.6" fill="#e03030" stroke="#222" stroke-width="0.5"/>
<circle cx="62.3" cy="382.2" r="1.6" fill="#e03030" stroke="#222" stroke-width="0.5"/>
<circle cx="101" cy="368.9" r="1.6" fill="#e03030" stroke="#222" stroke-width="0.5"/>
<circle cx="101" cy="375.7" r="1.6" fill="#e03030" stroke="#222" stroke-width="0.5"/>
<circle cx="101" cy="382.2" r="1.6" fill="#e03030" stroke="#222" stroke-width="0.5"/>
<rect x="22.0" y="394.8" width="3" height="2" fill="#222"/>
<rect x="60.5" y="394.8" width="3" height="2" fill="#222"/>
<rect x="99.0" y="394.8" width="3" height="2" fill="#222"/>
<rect x="22.0" y="401.2" width="3" height="2" fill="#222"/>
<rect x="60.5" y="401.2" width="3" height="2" fill="#222"/>
<rect x="99.0" y="401.2" width="3" height="2" fill="#222"/>
<rect x="22.0" y="408.1" width="3" height="2" fill="#222"/>
<rect x="60.5" y="408.1" width="3" height="2" fill="#222"/>
<rect x="99.0" y="408.1" width="3" height="2" fill="#222"/>
<rect x="22.0" y="415.5" width="3" height="2" fill="#222"/>
<rect x="60.5" y="415.5" width="3" height="2" fill="#222"/>
<rect x="99.0" y="415.5" width="3" height="2" fill="#222"/>
<circle cx="3.6" cy="340.3" r="1.9" fill="#c4c4c4"/><circle cx="7" cy="340.3" r="1.9" fill="#c4c4c4"/><path d="M3.8 341.5 h3 l-1.5 2.6z" fill="#c4c4c4"/><circle cx="3.6" cy="340.3" r="0.7" fill="#666"/><circle cx="7" cy="340.3" r="0.7" fill="#666"/>
<circle cx="3.6" cy="347.0" r="1.9" fill="#c4c4c4"/><circle cx="7" cy="347.0" r="1.9" fill="#c4c4c4"/><path d="M3.8 348.2 h3 l-1.5 2.6z" fill="#c4c4c4"/><circle cx="3.6" cy="347.0" r="0.7" fill="#666"/><circle cx="7" cy="347.0" r="0.7" fill="#666"/>
<circle cx="3.6" cy="353.90000000000003" r="1.9" fill="#c4c4c4"/><circle cx="7" cy="353.90000000000003" r="1.9" fill="#c4c4c4"/><path d="M3.8 355.1 h3 l-1.5 2.6z" fill="#c4c4c4"/><circle cx="3.6" cy="353.90000000000003" r="0.7" fill="#666"/><circle cx="7" cy="353.90000000000003" r="0.7" fill="#666"/>
<circle cx="3.6" cy="360.7" r="1.9" fill="#c4c4c4"/><circle cx="7" cy="360.7" r="1.9" fill="#c4c4c4"/><path d="M3.8 361.9 h3 l-1.5 2.6z" fill="#c4c4c4"/><circle cx="3.6" cy="360.7" r="0.7" fill="#666"/><circle cx="7" cy="360.7" r="0.7" fill="#666"/>
<circle cx="3.6" cy="367.7" r="1.9" fill="#c83030"/><circle cx="7" cy="367.7" r="1.9" fill="#c83030"/><path d="M3.4 368.9 h3.8 l-1.9 3.2z" fill="#c83030"/>
<circle cx="3.6" cy="374.5" r="1.9" fill="#c83030"/><circle cx="7" cy="374.5" r="1.9" fill="#c83030"/><path d="M3.4 375.7 h3.8 l-1.9 3.2z" fill="#c83030"/>
<circle cx="3.6" cy="381.0" r="1.9" fill="#c83030"/><circle cx="7" cy="381.0" r="1.9" fill="#c83030"/><path d="M3.4 382.2 h3.8 l-1.9 3.2z" fill="#c83030"/>
<rect x="1.8" y="394.0" width="7" height="3.6" rx="1.3" fill="#e070e0"/><path d="M3 395.8 h4.5" stroke="#fff" stroke-width="0.5" opacity="0.6"/>
<rect x="1.8" y="400.4" width="7" height="3.6" rx="1.3" fill="#e070e0"/><path d="M3 402.2 h4.5" stroke="#fff" stroke-width="0.5" opacity="0.6"/>
<rect x="1.8" y="407.3" width="7" height="3.6" rx="1.3" fill="#e070e0"/><path d="M3 409.1 h4.5" stroke="#fff" stroke-width="0.5" opacity="0.6"/>
<rect x="1.8" y="414.7" width="7" height="3.6" rx="1.3" fill="#30d040"/><path d="M3 416.5 h4.5" stroke="#fff" stroke-width="0.5" opacity="0.6"/>
<rect x="1.8" y="420.8" width="7" height="3.6" rx="1.3" fill="#30d040"/><path d="M3 422.6 h4.5" stroke="#fff" stroke-width="0.5" opacity="0.6"/>
<circle cx="12.7" cy="341.5" r="1.3" fill="#3fbf4a"/>
<circle cx="12.7" cy="348.2" r="1.3" fill="#3fbf4a"/>
<circle cx="12.7" cy="355.1" r="1.3" fill="#3fbf4a"/>
<circle cx="12.7" cy="361.9" r="1.3" fill="#3fbf4a"/>
<circle cx="12.7" cy="368.9" r="1.3" fill="#3fbf4a"/>
<circle cx="12.7" cy="375.7" r="1.3" fill="#3fbf4a"/>
<circle cx="12.7" cy="382.2" r="1.3" fill="#3fbf4a"/>
<circle cx="12.7" cy="395.8" r="1.3" fill="#3fbf4a"/>
<circle cx="12.7" cy="402.2" r="1.3" fill="#3fbf4a"/>
<circle cx="12.7" cy="409.1" r="1.3" fill="#3fbf4a"/>
<circle cx="12.7" cy="416.5" r="1.3" fill="#3fbf4a"/>
<circle cx="12.7" cy="422.6" r="1.3" fill="#3fbf4a"/>
<circle cx="5" cy="324.3" r="2" fill="#b08a40"/>
</svg>
<div class="a" style="left:1.4px;top:423.3px;width:652.1px;height:6px;background:#3c3c3c;"></div>
<div class="a" style="left:23px;top:424.5px;width:12px;height:3.8px;background:#555;"></div>
<div class="a" style="left:0px;top:428.6px;width:768px;height:3.4px;background:#26315a;"></div>
</body></html>
